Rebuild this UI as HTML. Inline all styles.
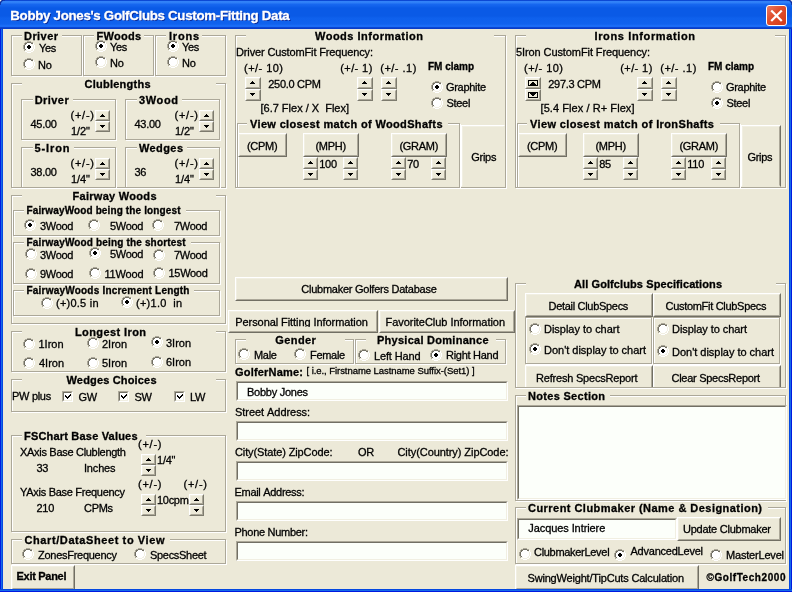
<!DOCTYPE html>
<html><head><meta charset="utf-8"><title>GolfClubs Custom-Fitting Data</title>
<style>
html,body{margin:0;padding:0;}
body{width:792px;height:592px;overflow:hidden;background:#ECE9D8;font-family:"Liberation Sans",sans-serif;position:relative;}
.t{position:absolute;white-space:nowrap;line-height:20px;height:20px;font-size:11px;color:#000;-webkit-text-stroke:0.3px currentColor;}
.r{position:absolute;}
#win{position:absolute;left:0;top:0;width:792px;height:592px;overflow:hidden;will-change:transform;}
</style></head>
<body><div id="win">
<div style="position:absolute;left:0px;top:0px;width:792px;height:29px;background:linear-gradient(180deg,#0c48d4 0px,#0c48d4 1px,#3282f8 1.5px,#2e7ef6 3px,#1868f0 4px,#1262ec 6px,#0a5ae6 8px,#0a5ae6 16px,#0e60ec 18px,#1062ee 24px,#1a6cf6 25.5px,#1a6cf6 26.5px,#0a46d4 27.5px,#0838c0 29px);"></div>
<div style="position:absolute;left:0px;top:29px;width:3px;height:563px;background:linear-gradient(90deg,#001ae0 0,#001ae0 1px,#156ae8 1px,#156ae8 2px,#0448e0 2px,#0448e0 3px);"></div>
<div style="position:absolute;left:789px;top:29px;width:3px;height:563px;background:linear-gradient(270deg,#001ae0 0,#001ae0 1px,#156ae8 1px,#156ae8 2px,#0448e0 2px,#0448e0 3px);"></div>
<div style="position:absolute;left:0px;top:589px;width:792px;height:3px;background:linear-gradient(0deg,#001ae0 0,#001ae0 1px,#156ae8 1px,#156ae8 2px,#0448e0 2px,#0448e0 3px);"></div>
<svg class="r" style="left:0;top:0" width="8" height="8" viewBox="0 0 8 8"><path d="M0 0h5C2 0 0 2 0 5z" fill="#fdfcf4"/><path d="M0 5C0 2 2 0 5 0" fill="none" stroke="#0a2a9c" stroke-width="1.2"/></svg>
<svg class="r" style="left:784px;top:0" width="8" height="8" viewBox="0 0 8 8"><path d="M8 0h-5C6 0 8 2 8 5z" fill="#fdfcf4"/><path d="M8 5C8 2 6 0 3 0" fill="none" stroke="#0a2a9c" stroke-width="1.2"/></svg>
<span class="t" style="left:10.3px;top:5.99px;font-size:13.3px;font-weight:bold;letter-spacing:-0.300px;color:#fff;text-shadow:1px 1px 0 #0a2a9a;">Bobby&nbsp;Jones&#x27;s&nbsp;GolfClubs&nbsp;Custom-Fitting&nbsp;Data</span>
<div style="position:absolute;left:766px;top:5px;width:21px;height:21px;box-sizing:border-box;border:1px solid #fff;border-radius:3px;background:linear-gradient(135deg,#ea7a62 0%,#e0502f 40%,#d43a18 100%);"></div>
<svg class="r" style="left:766px;top:5px" width="21" height="21" viewBox="0 0 21 21"><path d="M6 6.2L15 15.2M15 6.2L6 15.2" stroke="#fff" stroke-width="2.2" stroke-linecap="square"/></svg>
<div style="position:absolute;left:11px;top:35px;width:71px;height:41px;box-sizing:border-box;border:1px solid #ACA899;"></div>
<div style="position:absolute;left:12px;top:36px;width:71px;height:41px;box-sizing:border-box;border:1px solid #FFFFFF;"></div>
<div style="position:absolute;left:81px;top:35px;width:1px;height:41px;background:#ACA899;"></div>
<div style="position:absolute;left:11px;top:75px;width:71px;height:1px;background:#ACA899;"></div>
<div style="position:absolute;left:22px;top:34px;width:40px;height:4px;background:#ECE9D8;"></div>
<span class="t" style="left:24px;top:26.19px;font-size:11px;font-weight:bold;letter-spacing:0.441px;">Driver</span>
<svg class="r" style="left:23px;top:41px" width="12" height="12" viewBox="0 0 12 12" shape-rendering="crispEdges"><path d="M2 2h8v8h-8z M4 1h4v10h-4z M1 4h10v4h-10z" fill="#fff"/><path d="M4 0h4v1h-4z M2 1h2v1h-2z M8 1h2v1h-2z M1 2h1v2h-1z M0 4h1v4h-1z M1 8h1v2h-1z" fill="#ACA899"/><path d="M4 1h4v1h-4z M2 2h2v1h-2z M8 2h2v1h-2z M2 3h1v1h-1z M1 4h1v4h-1z M2 8h1v1h-1z" fill="#716F64"/><path d="M10 2h1v2h-1z M11 4h1v4h-1z M10 8h1v2h-1z M8 10h2v1h-2z M4 11h4v1h-4z M2 10h2v1h-2z" fill="#FFFFFF"/><path d="M9 3h1v1h-1z M10 4h1v4h-1z M9 8h1v1h-1z M8 9h2v1h-2z M4 10h4v1h-4z M2 9h2v1h-2z" fill="#F1EFE2"/><rect x="4" y="5" width="4" height="2" fill="#000"/><rect x="5" y="4" width="2" height="4" fill="#000"/></svg>
<span class="t" style="left:39px;top:38.19px;font-size:11px;letter-spacing:-0.300px;">Yes</span>
<svg class="r" style="left:23px;top:58px" width="12" height="12" viewBox="0 0 12 12" shape-rendering="crispEdges"><path d="M2 2h8v8h-8z M4 1h4v10h-4z M1 4h10v4h-10z" fill="#fff"/><path d="M4 0h4v1h-4z M2 1h2v1h-2z M8 1h2v1h-2z M1 2h1v2h-1z M0 4h1v4h-1z M1 8h1v2h-1z" fill="#ACA899"/><path d="M4 1h4v1h-4z M2 2h2v1h-2z M8 2h2v1h-2z M2 3h1v1h-1z M1 4h1v4h-1z M2 8h1v1h-1z" fill="#716F64"/><path d="M10 2h1v2h-1z M11 4h1v4h-1z M10 8h1v2h-1z M8 10h2v1h-2z M4 11h4v1h-4z M2 10h2v1h-2z" fill="#FFFFFF"/><path d="M9 3h1v1h-1z M10 4h1v4h-1z M9 8h1v1h-1z M8 9h2v1h-2z M4 10h4v1h-4z M2 9h2v1h-2z" fill="#F1EFE2"/></svg>
<span class="t" style="left:38px;top:55.19px;font-size:11px;letter-spacing:-0.300px;">No</span>
<div style="position:absolute;left:83px;top:35px;width:71px;height:41px;box-sizing:border-box;border:1px solid #ACA899;"></div>
<div style="position:absolute;left:84px;top:36px;width:71px;height:41px;box-sizing:border-box;border:1px solid #FFFFFF;"></div>
<div style="position:absolute;left:153px;top:35px;width:1px;height:41px;background:#ACA899;"></div>
<div style="position:absolute;left:83px;top:75px;width:71px;height:1px;background:#ACA899;"></div>
<div style="position:absolute;left:94px;top:34px;width:50px;height:4px;background:#ECE9D8;"></div>
<span class="t" style="left:96.5px;top:26.19px;font-size:11px;font-weight:bold;letter-spacing:0.265px;">FWoods</span>
<svg class="r" style="left:95px;top:40px" width="12" height="12" viewBox="0 0 12 12" shape-rendering="crispEdges"><path d="M2 2h8v8h-8z M4 1h4v10h-4z M1 4h10v4h-10z" fill="#fff"/><path d="M4 0h4v1h-4z M2 1h2v1h-2z M8 1h2v1h-2z M1 2h1v2h-1z M0 4h1v4h-1z M1 8h1v2h-1z" fill="#ACA899"/><path d="M4 1h4v1h-4z M2 2h2v1h-2z M8 2h2v1h-2z M2 3h1v1h-1z M1 4h1v4h-1z M2 8h1v1h-1z" fill="#716F64"/><path d="M10 2h1v2h-1z M11 4h1v4h-1z M10 8h1v2h-1z M8 10h2v1h-2z M4 11h4v1h-4z M2 10h2v1h-2z" fill="#FFFFFF"/><path d="M9 3h1v1h-1z M10 4h1v4h-1z M9 8h1v1h-1z M8 9h2v1h-2z M4 10h4v1h-4z M2 9h2v1h-2z" fill="#F1EFE2"/><rect x="4" y="5" width="4" height="2" fill="#000"/><rect x="5" y="4" width="2" height="4" fill="#000"/></svg>
<span class="t" style="left:110px;top:37.19px;font-size:11px;letter-spacing:-0.300px;">Yes</span>
<svg class="r" style="left:95px;top:56px" width="12" height="12" viewBox="0 0 12 12" shape-rendering="crispEdges"><path d="M2 2h8v8h-8z M4 1h4v10h-4z M1 4h10v4h-10z" fill="#fff"/><path d="M4 0h4v1h-4z M2 1h2v1h-2z M8 1h2v1h-2z M1 2h1v2h-1z M0 4h1v4h-1z M1 8h1v2h-1z" fill="#ACA899"/><path d="M4 1h4v1h-4z M2 2h2v1h-2z M8 2h2v1h-2z M2 3h1v1h-1z M1 4h1v4h-1z M2 8h1v1h-1z" fill="#716F64"/><path d="M10 2h1v2h-1z M11 4h1v4h-1z M10 8h1v2h-1z M8 10h2v1h-2z M4 11h4v1h-4z M2 10h2v1h-2z" fill="#FFFFFF"/><path d="M9 3h1v1h-1z M10 4h1v4h-1z M9 8h1v1h-1z M8 9h2v1h-2z M4 10h4v1h-4z M2 9h2v1h-2z" fill="#F1EFE2"/></svg>
<span class="t" style="left:110px;top:53.19px;font-size:11px;letter-spacing:-0.300px;">No</span>
<div style="position:absolute;left:155px;top:35px;width:71px;height:41px;box-sizing:border-box;border:1px solid #ACA899;"></div>
<div style="position:absolute;left:156px;top:36px;width:71px;height:41px;box-sizing:border-box;border:1px solid #FFFFFF;"></div>
<div style="position:absolute;left:225px;top:35px;width:1px;height:41px;background:#ACA899;"></div>
<div style="position:absolute;left:155px;top:75px;width:71px;height:1px;background:#ACA899;"></div>
<div style="position:absolute;left:166px;top:34px;width:36px;height:4px;background:#ECE9D8;"></div>
<span class="t" style="left:169px;top:26.19px;font-size:11px;font-weight:bold;letter-spacing:0.777px;">Irons</span>
<svg class="r" style="left:167px;top:40px" width="12" height="12" viewBox="0 0 12 12" shape-rendering="crispEdges"><path d="M2 2h8v8h-8z M4 1h4v10h-4z M1 4h10v4h-10z" fill="#fff"/><path d="M4 0h4v1h-4z M2 1h2v1h-2z M8 1h2v1h-2z M1 2h1v2h-1z M0 4h1v4h-1z M1 8h1v2h-1z" fill="#ACA899"/><path d="M4 1h4v1h-4z M2 2h2v1h-2z M8 2h2v1h-2z M2 3h1v1h-1z M1 4h1v4h-1z M2 8h1v1h-1z" fill="#716F64"/><path d="M10 2h1v2h-1z M11 4h1v4h-1z M10 8h1v2h-1z M8 10h2v1h-2z M4 11h4v1h-4z M2 10h2v1h-2z" fill="#FFFFFF"/><path d="M9 3h1v1h-1z M10 4h1v4h-1z M9 8h1v1h-1z M8 9h2v1h-2z M4 10h4v1h-4z M2 9h2v1h-2z" fill="#F1EFE2"/><rect x="4" y="5" width="4" height="2" fill="#000"/><rect x="5" y="4" width="2" height="4" fill="#000"/></svg>
<span class="t" style="left:182px;top:37.19px;font-size:11px;letter-spacing:-0.300px;">Yes</span>
<svg class="r" style="left:167px;top:56px" width="12" height="12" viewBox="0 0 12 12" shape-rendering="crispEdges"><path d="M2 2h8v8h-8z M4 1h4v10h-4z M1 4h10v4h-10z" fill="#fff"/><path d="M4 0h4v1h-4z M2 1h2v1h-2z M8 1h2v1h-2z M1 2h1v2h-1z M0 4h1v4h-1z M1 8h1v2h-1z" fill="#ACA899"/><path d="M4 1h4v1h-4z M2 2h2v1h-2z M8 2h2v1h-2z M2 3h1v1h-1z M1 4h1v4h-1z M2 8h1v1h-1z" fill="#716F64"/><path d="M10 2h1v2h-1z M11 4h1v4h-1z M10 8h1v2h-1z M8 10h2v1h-2z M4 11h4v1h-4z M2 10h2v1h-2z" fill="#FFFFFF"/><path d="M9 3h1v1h-1z M10 4h1v4h-1z M9 8h1v1h-1z M8 9h2v1h-2z M4 10h4v1h-4z M2 9h2v1h-2z" fill="#F1EFE2"/></svg>
<span class="t" style="left:182px;top:53.19px;font-size:11px;letter-spacing:-0.300px;">No</span>
<div style="position:absolute;left:11px;top:83px;width:215px;height:105px;box-sizing:border-box;border:1px solid #ACA899;"></div>
<div style="position:absolute;left:12px;top:84px;width:215px;height:105px;box-sizing:border-box;border:1px solid #FFFFFF;"></div>
<div style="position:absolute;left:225px;top:83px;width:1px;height:105px;background:#ACA899;"></div>
<div style="position:absolute;left:11px;top:187px;width:215px;height:1px;background:#ACA899;"></div>
<div style="position:absolute;left:22px;top:82px;width:194px;height:4px;background:#ECE9D8;"></div>
<span class="t" style="left:84.5px;top:74.19px;font-size:11px;font-weight:bold;letter-spacing:0.245px;">Clublengths</span>
<div style="position:absolute;left:21px;top:99px;width:95px;height:41px;box-sizing:border-box;border:1px solid #ACA899;"></div>
<div style="position:absolute;left:22px;top:100px;width:95px;height:41px;box-sizing:border-box;border:1px solid #FFFFFF;"></div>
<div style="position:absolute;left:115px;top:99px;width:1px;height:41px;background:#ACA899;"></div>
<div style="position:absolute;left:21px;top:139px;width:95px;height:1px;background:#ACA899;"></div>
<div style="position:absolute;left:32.7px;top:98px;width:40px;height:4px;background:#ECE9D8;"></div>
<span class="t" style="left:34.7px;top:90.19px;font-size:11px;font-weight:bold;letter-spacing:0.441px;">Driver</span>
<span class="t" style="left:30.5px;top:114.19px;font-size:11px;letter-spacing:-0.300px;">45.00</span>
<span class="t" style="left:70.5px;top:105.19px;font-size:11px;letter-spacing:0.757px;">(+/-)</span>
<span class="t" style="left:71px;top:121.19px;font-size:11px;letter-spacing:-0.065px;">1/2&quot;</span>
<div style="position:absolute;left:95px;top:110px;width:15px;height:11px;box-sizing:border-box;background:#ECE9D8;border:1px solid;border-color:#FFFFFF #7d7b6e #7d7b6e #FFFFFF;"></div>
<div style="position:absolute;left:96px;top:111px;width:13px;height:9px;box-sizing:border-box;border:1px solid;border-color:#F1EFE2 #ACA899 #ACA899 #F1EFE2;"></div>
<div style="position:absolute;left:102px;top:114px;width:1px;height:1px;background:#000;"></div>
<div style="position:absolute;left:101px;top:115px;width:3px;height:1px;background:#000;"></div>
<div style="position:absolute;left:100px;top:116px;width:5px;height:1px;background:#000;"></div>
<div style="position:absolute;left:95px;top:121px;width:15px;height:11px;box-sizing:border-box;background:#ECE9D8;border:1px solid;border-color:#FFFFFF #7d7b6e #7d7b6e #FFFFFF;"></div>
<div style="position:absolute;left:96px;top:122px;width:13px;height:9px;box-sizing:border-box;border:1px solid;border-color:#F1EFE2 #ACA899 #ACA899 #F1EFE2;"></div>
<div style="position:absolute;left:100px;top:125px;width:5px;height:1px;background:#000;"></div>
<div style="position:absolute;left:101px;top:126px;width:3px;height:1px;background:#000;"></div>
<div style="position:absolute;left:102px;top:127px;width:1px;height:1px;background:#000;"></div>
<div style="position:absolute;left:125px;top:99px;width:95px;height:41px;box-sizing:border-box;border:1px solid #ACA899;"></div>
<div style="position:absolute;left:126px;top:100px;width:95px;height:41px;box-sizing:border-box;border:1px solid #FFFFFF;"></div>
<div style="position:absolute;left:219px;top:99px;width:1px;height:41px;background:#ACA899;"></div>
<div style="position:absolute;left:125px;top:139px;width:95px;height:1px;background:#ACA899;"></div>
<div style="position:absolute;left:137px;top:98px;width:45px;height:4px;background:#ECE9D8;"></div>
<span class="t" style="left:139px;top:90.19px;font-size:11px;font-weight:bold;letter-spacing:0.636px;">3Wood</span>
<span class="t" style="left:134.5px;top:114.19px;font-size:11px;letter-spacing:-0.300px;">43.00</span>
<span class="t" style="left:174.5px;top:105.19px;font-size:11px;letter-spacing:0.757px;">(+/-)</span>
<span class="t" style="left:175px;top:121.19px;font-size:11px;letter-spacing:-0.065px;">1/2&quot;</span>
<div style="position:absolute;left:199px;top:110px;width:15px;height:11px;box-sizing:border-box;background:#ECE9D8;border:1px solid;border-color:#FFFFFF #7d7b6e #7d7b6e #FFFFFF;"></div>
<div style="position:absolute;left:200px;top:111px;width:13px;height:9px;box-sizing:border-box;border:1px solid;border-color:#F1EFE2 #ACA899 #ACA899 #F1EFE2;"></div>
<div style="position:absolute;left:206px;top:114px;width:1px;height:1px;background:#000;"></div>
<div style="position:absolute;left:205px;top:115px;width:3px;height:1px;background:#000;"></div>
<div style="position:absolute;left:204px;top:116px;width:5px;height:1px;background:#000;"></div>
<div style="position:absolute;left:199px;top:121px;width:15px;height:11px;box-sizing:border-box;background:#ECE9D8;border:1px solid;border-color:#FFFFFF #7d7b6e #7d7b6e #FFFFFF;"></div>
<div style="position:absolute;left:200px;top:122px;width:13px;height:9px;box-sizing:border-box;border:1px solid;border-color:#F1EFE2 #ACA899 #ACA899 #F1EFE2;"></div>
<div style="position:absolute;left:204px;top:125px;width:5px;height:1px;background:#000;"></div>
<div style="position:absolute;left:205px;top:126px;width:3px;height:1px;background:#000;"></div>
<div style="position:absolute;left:206px;top:127px;width:1px;height:1px;background:#000;"></div>
<div style="position:absolute;left:21px;top:147px;width:95px;height:41px;box-sizing:border-box;border:1px solid #ACA899;"></div>
<div style="position:absolute;left:22px;top:148px;width:95px;height:41px;box-sizing:border-box;border:1px solid #FFFFFF;"></div>
<div style="position:absolute;left:115px;top:147px;width:1px;height:41px;background:#ACA899;"></div>
<div style="position:absolute;left:21px;top:187px;width:95px;height:1px;background:#ACA899;"></div>
<div style="position:absolute;left:32.5px;top:146px;width:41px;height:4px;background:#ECE9D8;"></div>
<span class="t" style="left:34.5px;top:138.19px;font-size:11px;font-weight:bold;letter-spacing:0.889px;">5-Iron</span>
<span class="t" style="left:30.5px;top:162.19px;font-size:11px;letter-spacing:-0.300px;">38.00</span>
<span class="t" style="left:70.5px;top:153.19px;font-size:11px;letter-spacing:0.757px;">(+/-)</span>
<span class="t" style="left:71px;top:169.19px;font-size:11px;letter-spacing:-0.065px;">1/4&quot;</span>
<div style="position:absolute;left:95px;top:158px;width:15px;height:11px;box-sizing:border-box;background:#ECE9D8;border:1px solid;border-color:#FFFFFF #7d7b6e #7d7b6e #FFFFFF;"></div>
<div style="position:absolute;left:96px;top:159px;width:13px;height:9px;box-sizing:border-box;border:1px solid;border-color:#F1EFE2 #ACA899 #ACA899 #F1EFE2;"></div>
<div style="position:absolute;left:102px;top:162px;width:1px;height:1px;background:#000;"></div>
<div style="position:absolute;left:101px;top:163px;width:3px;height:1px;background:#000;"></div>
<div style="position:absolute;left:100px;top:164px;width:5px;height:1px;background:#000;"></div>
<div style="position:absolute;left:95px;top:169px;width:15px;height:11px;box-sizing:border-box;background:#ECE9D8;border:1px solid;border-color:#FFFFFF #7d7b6e #7d7b6e #FFFFFF;"></div>
<div style="position:absolute;left:96px;top:170px;width:13px;height:9px;box-sizing:border-box;border:1px solid;border-color:#F1EFE2 #ACA899 #ACA899 #F1EFE2;"></div>
<div style="position:absolute;left:100px;top:173px;width:5px;height:1px;background:#000;"></div>
<div style="position:absolute;left:101px;top:174px;width:3px;height:1px;background:#000;"></div>
<div style="position:absolute;left:102px;top:175px;width:1px;height:1px;background:#000;"></div>
<div style="position:absolute;left:125px;top:147px;width:95px;height:41px;box-sizing:border-box;border:1px solid #ACA899;"></div>
<div style="position:absolute;left:126px;top:148px;width:95px;height:41px;box-sizing:border-box;border:1px solid #FFFFFF;"></div>
<div style="position:absolute;left:219px;top:147px;width:1px;height:41px;background:#ACA899;"></div>
<div style="position:absolute;left:125px;top:187px;width:95px;height:1px;background:#ACA899;"></div>
<div style="position:absolute;left:137px;top:146px;width:50px;height:4px;background:#ECE9D8;"></div>
<span class="t" style="left:139px;top:138.19px;font-size:11px;font-weight:bold;letter-spacing:0.405px;">Wedges</span>
<span class="t" style="left:134.5px;top:162.19px;font-size:11px;letter-spacing:-0.300px;">36</span>
<span class="t" style="left:174.5px;top:153.19px;font-size:11px;letter-spacing:0.757px;">(+/-)</span>
<span class="t" style="left:175px;top:169.19px;font-size:11px;letter-spacing:-0.065px;">1/4&quot;</span>
<div style="position:absolute;left:199px;top:158px;width:15px;height:11px;box-sizing:border-box;background:#ECE9D8;border:1px solid;border-color:#FFFFFF #7d7b6e #7d7b6e #FFFFFF;"></div>
<div style="position:absolute;left:200px;top:159px;width:13px;height:9px;box-sizing:border-box;border:1px solid;border-color:#F1EFE2 #ACA899 #ACA899 #F1EFE2;"></div>
<div style="position:absolute;left:206px;top:162px;width:1px;height:1px;background:#000;"></div>
<div style="position:absolute;left:205px;top:163px;width:3px;height:1px;background:#000;"></div>
<div style="position:absolute;left:204px;top:164px;width:5px;height:1px;background:#000;"></div>
<div style="position:absolute;left:199px;top:169px;width:15px;height:11px;box-sizing:border-box;background:#ECE9D8;border:1px solid;border-color:#FFFFFF #7d7b6e #7d7b6e #FFFFFF;"></div>
<div style="position:absolute;left:200px;top:170px;width:13px;height:9px;box-sizing:border-box;border:1px solid;border-color:#F1EFE2 #ACA899 #ACA899 #F1EFE2;"></div>
<div style="position:absolute;left:204px;top:173px;width:5px;height:1px;background:#000;"></div>
<div style="position:absolute;left:205px;top:174px;width:3px;height:1px;background:#000;"></div>
<div style="position:absolute;left:206px;top:175px;width:1px;height:1px;background:#000;"></div>
<div style="position:absolute;left:11px;top:195px;width:215px;height:129px;box-sizing:border-box;border:1px solid #ACA899;"></div>
<div style="position:absolute;left:12px;top:196px;width:215px;height:129px;box-sizing:border-box;border:1px solid #FFFFFF;"></div>
<div style="position:absolute;left:225px;top:195px;width:1px;height:129px;background:#ACA899;"></div>
<div style="position:absolute;left:11px;top:323px;width:215px;height:1px;background:#ACA899;"></div>
<div style="position:absolute;left:22px;top:194px;width:194px;height:4px;background:#ECE9D8;"></div>
<span class="t" style="left:72.5px;top:186.19px;font-size:11px;font-weight:bold;letter-spacing:0.293px;">Fairway&nbsp;Woods</span>
<div style="position:absolute;left:13px;top:210px;width:207px;height:26px;box-sizing:border-box;border:1px solid #ACA899;"></div>
<div style="position:absolute;left:14px;top:211px;width:207px;height:26px;box-sizing:border-box;border:1px solid #FFFFFF;"></div>
<div style="position:absolute;left:219px;top:210px;width:1px;height:26px;background:#ACA899;"></div>
<div style="position:absolute;left:13px;top:235px;width:207px;height:1px;background:#ACA899;"></div>
<div style="position:absolute;left:24px;top:209px;width:162px;height:4px;background:#ECE9D8;"></div>
<span class="t" style="left:26.5px;top:200.53px;font-size:10px;font-weight:bold;letter-spacing:0.128px;">FairwayWood&nbsp;being&nbsp;the&nbsp;longest</span>
<svg class="r" style="left:24px;top:219px" width="12" height="12" viewBox="0 0 12 12" shape-rendering="crispEdges"><path d="M2 2h8v8h-8z M4 1h4v10h-4z M1 4h10v4h-10z" fill="#fff"/><path d="M4 0h4v1h-4z M2 1h2v1h-2z M8 1h2v1h-2z M1 2h1v2h-1z M0 4h1v4h-1z M1 8h1v2h-1z" fill="#ACA899"/><path d="M4 1h4v1h-4z M2 2h2v1h-2z M8 2h2v1h-2z M2 3h1v1h-1z M1 4h1v4h-1z M2 8h1v1h-1z" fill="#716F64"/><path d="M10 2h1v2h-1z M11 4h1v4h-1z M10 8h1v2h-1z M8 10h2v1h-2z M4 11h4v1h-4z M2 10h2v1h-2z" fill="#FFFFFF"/><path d="M9 3h1v1h-1z M10 4h1v4h-1z M9 8h1v1h-1z M8 9h2v1h-2z M4 10h4v1h-4z M2 9h2v1h-2z" fill="#F1EFE2"/><rect x="4" y="5" width="4" height="2" fill="#000"/><rect x="5" y="4" width="2" height="4" fill="#000"/></svg>
<span class="t" style="left:40px;top:216.19px;font-size:11px;letter-spacing:-0.300px;">3Wood</span>
<svg class="r" style="left:88px;top:219px" width="12" height="12" viewBox="0 0 12 12" shape-rendering="crispEdges"><path d="M2 2h8v8h-8z M4 1h4v10h-4z M1 4h10v4h-10z" fill="#fff"/><path d="M4 0h4v1h-4z M2 1h2v1h-2z M8 1h2v1h-2z M1 2h1v2h-1z M0 4h1v4h-1z M1 8h1v2h-1z" fill="#ACA899"/><path d="M4 1h4v1h-4z M2 2h2v1h-2z M8 2h2v1h-2z M2 3h1v1h-1z M1 4h1v4h-1z M2 8h1v1h-1z" fill="#716F64"/><path d="M10 2h1v2h-1z M11 4h1v4h-1z M10 8h1v2h-1z M8 10h2v1h-2z M4 11h4v1h-4z M2 10h2v1h-2z" fill="#FFFFFF"/><path d="M9 3h1v1h-1z M10 4h1v4h-1z M9 8h1v1h-1z M8 9h2v1h-2z M4 10h4v1h-4z M2 9h2v1h-2z" fill="#F1EFE2"/></svg>
<span class="t" style="left:110px;top:216.19px;font-size:11px;letter-spacing:-0.300px;">5Wood</span>
<svg class="r" style="left:152px;top:219px" width="12" height="12" viewBox="0 0 12 12" shape-rendering="crispEdges"><path d="M2 2h8v8h-8z M4 1h4v10h-4z M1 4h10v4h-10z" fill="#fff"/><path d="M4 0h4v1h-4z M2 1h2v1h-2z M8 1h2v1h-2z M1 2h1v2h-1z M0 4h1v4h-1z M1 8h1v2h-1z" fill="#ACA899"/><path d="M4 1h4v1h-4z M2 2h2v1h-2z M8 2h2v1h-2z M2 3h1v1h-1z M1 4h1v4h-1z M2 8h1v1h-1z" fill="#716F64"/><path d="M10 2h1v2h-1z M11 4h1v4h-1z M10 8h1v2h-1z M8 10h2v1h-2z M4 11h4v1h-4z M2 10h2v1h-2z" fill="#FFFFFF"/><path d="M9 3h1v1h-1z M10 4h1v4h-1z M9 8h1v1h-1z M8 9h2v1h-2z M4 10h4v1h-4z M2 9h2v1h-2z" fill="#F1EFE2"/></svg>
<span class="t" style="left:174px;top:216.19px;font-size:11px;letter-spacing:-0.300px;">7Wood</span>
<div style="position:absolute;left:13px;top:242px;width:207px;height:42px;box-sizing:border-box;border:1px solid #ACA899;"></div>
<div style="position:absolute;left:14px;top:243px;width:207px;height:42px;box-sizing:border-box;border:1px solid #FFFFFF;"></div>
<div style="position:absolute;left:219px;top:242px;width:1px;height:42px;background:#ACA899;"></div>
<div style="position:absolute;left:13px;top:283px;width:207px;height:1px;background:#ACA899;"></div>
<div style="position:absolute;left:24px;top:241px;width:167px;height:4px;background:#ECE9D8;"></div>
<span class="t" style="left:26.5px;top:232.53px;font-size:10px;font-weight:bold;letter-spacing:0.162px;">FairwayWood&nbsp;being&nbsp;the&nbsp;shortest</span>
<svg class="r" style="left:25px;top:248px" width="12" height="12" viewBox="0 0 12 12" shape-rendering="crispEdges"><path d="M2 2h8v8h-8z M4 1h4v10h-4z M1 4h10v4h-10z" fill="#fff"/><path d="M4 0h4v1h-4z M2 1h2v1h-2z M8 1h2v1h-2z M1 2h1v2h-1z M0 4h1v4h-1z M1 8h1v2h-1z" fill="#ACA899"/><path d="M4 1h4v1h-4z M2 2h2v1h-2z M8 2h2v1h-2z M2 3h1v1h-1z M1 4h1v4h-1z M2 8h1v1h-1z" fill="#716F64"/><path d="M10 2h1v2h-1z M11 4h1v4h-1z M10 8h1v2h-1z M8 10h2v1h-2z M4 11h4v1h-4z M2 10h2v1h-2z" fill="#FFFFFF"/><path d="M9 3h1v1h-1z M10 4h1v4h-1z M9 8h1v1h-1z M8 9h2v1h-2z M4 10h4v1h-4z M2 9h2v1h-2z" fill="#F1EFE2"/></svg>
<span class="t" style="left:40px;top:245.19px;font-size:11px;letter-spacing:-0.300px;">3Wood</span>
<svg class="r" style="left:89px;top:247px" width="12" height="12" viewBox="0 0 12 12" shape-rendering="crispEdges"><path d="M2 2h8v8h-8z M4 1h4v10h-4z M1 4h10v4h-10z" fill="#fff"/><path d="M4 0h4v1h-4z M2 1h2v1h-2z M8 1h2v1h-2z M1 2h1v2h-1z M0 4h1v4h-1z M1 8h1v2h-1z" fill="#ACA899"/><path d="M4 1h4v1h-4z M2 2h2v1h-2z M8 2h2v1h-2z M2 3h1v1h-1z M1 4h1v4h-1z M2 8h1v1h-1z" fill="#716F64"/><path d="M10 2h1v2h-1z M11 4h1v4h-1z M10 8h1v2h-1z M8 10h2v1h-2z M4 11h4v1h-4z M2 10h2v1h-2z" fill="#FFFFFF"/><path d="M9 3h1v1h-1z M10 4h1v4h-1z M9 8h1v1h-1z M8 9h2v1h-2z M4 10h4v1h-4z M2 9h2v1h-2z" fill="#F1EFE2"/><rect x="4" y="5" width="4" height="2" fill="#000"/><rect x="5" y="4" width="2" height="4" fill="#000"/></svg>
<span class="t" style="left:110px;top:244.19px;font-size:11px;letter-spacing:-0.300px;">5Wood</span>
<svg class="r" style="left:153px;top:249px" width="12" height="12" viewBox="0 0 12 12" shape-rendering="crispEdges"><path d="M2 2h8v8h-8z M4 1h4v10h-4z M1 4h10v4h-10z" fill="#fff"/><path d="M4 0h4v1h-4z M2 1h2v1h-2z M8 1h2v1h-2z M1 2h1v2h-1z M0 4h1v4h-1z M1 8h1v2h-1z" fill="#ACA899"/><path d="M4 1h4v1h-4z M2 2h2v1h-2z M8 2h2v1h-2z M2 3h1v1h-1z M1 4h1v4h-1z M2 8h1v1h-1z" fill="#716F64"/><path d="M10 2h1v2h-1z M11 4h1v4h-1z M10 8h1v2h-1z M8 10h2v1h-2z M4 11h4v1h-4z M2 10h2v1h-2z" fill="#FFFFFF"/><path d="M9 3h1v1h-1z M10 4h1v4h-1z M9 8h1v1h-1z M8 9h2v1h-2z M4 10h4v1h-4z M2 9h2v1h-2z" fill="#F1EFE2"/></svg>
<span class="t" style="left:174px;top:245.19px;font-size:11px;letter-spacing:-0.300px;">7Wood</span>
<svg class="r" style="left:25px;top:268px" width="12" height="12" viewBox="0 0 12 12" shape-rendering="crispEdges"><path d="M2 2h8v8h-8z M4 1h4v10h-4z M1 4h10v4h-10z" fill="#fff"/><path d="M4 0h4v1h-4z M2 1h2v1h-2z M8 1h2v1h-2z M1 2h1v2h-1z M0 4h1v4h-1z M1 8h1v2h-1z" fill="#ACA899"/><path d="M4 1h4v1h-4z M2 2h2v1h-2z M8 2h2v1h-2z M2 3h1v1h-1z M1 4h1v4h-1z M2 8h1v1h-1z" fill="#716F64"/><path d="M10 2h1v2h-1z M11 4h1v4h-1z M10 8h1v2h-1z M8 10h2v1h-2z M4 11h4v1h-4z M2 10h2v1h-2z" fill="#FFFFFF"/><path d="M9 3h1v1h-1z M10 4h1v4h-1z M9 8h1v1h-1z M8 9h2v1h-2z M4 10h4v1h-4z M2 9h2v1h-2z" fill="#F1EFE2"/></svg>
<span class="t" style="left:40px;top:264.19px;font-size:11px;letter-spacing:-0.300px;">9Wood</span>
<svg class="r" style="left:89px;top:267px" width="12" height="12" viewBox="0 0 12 12" shape-rendering="crispEdges"><path d="M2 2h8v8h-8z M4 1h4v10h-4z M1 4h10v4h-10z" fill="#fff"/><path d="M4 0h4v1h-4z M2 1h2v1h-2z M8 1h2v1h-2z M1 2h1v2h-1z M0 4h1v4h-1z M1 8h1v2h-1z" fill="#ACA899"/><path d="M4 1h4v1h-4z M2 2h2v1h-2z M8 2h2v1h-2z M2 3h1v1h-1z M1 4h1v4h-1z M2 8h1v1h-1z" fill="#716F64"/><path d="M10 2h1v2h-1z M11 4h1v4h-1z M10 8h1v2h-1z M8 10h2v1h-2z M4 11h4v1h-4z M2 10h2v1h-2z" fill="#FFFFFF"/><path d="M9 3h1v1h-1z M10 4h1v4h-1z M9 8h1v1h-1z M8 9h2v1h-2z M4 10h4v1h-4z M2 9h2v1h-2z" fill="#F1EFE2"/></svg>
<span class="t" style="left:104.5px;top:264.19px;font-size:11px;letter-spacing:-0.191px;">11Wood</span>
<svg class="r" style="left:153px;top:267px" width="12" height="12" viewBox="0 0 12 12" shape-rendering="crispEdges"><path d="M2 2h8v8h-8z M4 1h4v10h-4z M1 4h10v4h-10z" fill="#fff"/><path d="M4 0h4v1h-4z M2 1h2v1h-2z M8 1h2v1h-2z M1 2h1v2h-1z M0 4h1v4h-1z M1 8h1v2h-1z" fill="#ACA899"/><path d="M4 1h4v1h-4z M2 2h2v1h-2z M8 2h2v1h-2z M2 3h1v1h-1z M1 4h1v4h-1z M2 8h1v1h-1z" fill="#716F64"/><path d="M10 2h1v2h-1z M11 4h1v4h-1z M10 8h1v2h-1z M8 10h2v1h-2z M4 11h4v1h-4z M2 10h2v1h-2z" fill="#FFFFFF"/><path d="M9 3h1v1h-1z M10 4h1v4h-1z M9 8h1v1h-1z M8 9h2v1h-2z M4 10h4v1h-4z M2 9h2v1h-2z" fill="#F1EFE2"/></svg>
<span class="t" style="left:168.5px;top:263.19px;font-size:11px;letter-spacing:-0.300px;">15Wood</span>
<div style="position:absolute;left:13px;top:290px;width:207px;height:26px;box-sizing:border-box;border:1px solid #ACA899;"></div>
<div style="position:absolute;left:14px;top:291px;width:207px;height:26px;box-sizing:border-box;border:1px solid #FFFFFF;"></div>
<div style="position:absolute;left:219px;top:290px;width:1px;height:26px;background:#ACA899;"></div>
<div style="position:absolute;left:13px;top:315px;width:207px;height:1px;background:#ACA899;"></div>
<div style="position:absolute;left:24px;top:289px;width:170px;height:4px;background:#ECE9D8;"></div>
<span class="t" style="left:26.5px;top:280.54px;font-size:10px;font-weight:bold;letter-spacing:0.211px;">FairwayWoods&nbsp;Increment&nbsp;Length</span>
<svg class="r" style="left:41px;top:297px" width="12" height="12" viewBox="0 0 12 12" shape-rendering="crispEdges"><path d="M2 2h8v8h-8z M4 1h4v10h-4z M1 4h10v4h-10z" fill="#fff"/><path d="M4 0h4v1h-4z M2 1h2v1h-2z M8 1h2v1h-2z M1 2h1v2h-1z M0 4h1v4h-1z M1 8h1v2h-1z" fill="#ACA899"/><path d="M4 1h4v1h-4z M2 2h2v1h-2z M8 2h2v1h-2z M2 3h1v1h-1z M1 4h1v4h-1z M2 8h1v1h-1z" fill="#716F64"/><path d="M10 2h1v2h-1z M11 4h1v4h-1z M10 8h1v2h-1z M8 10h2v1h-2z M4 11h4v1h-4z M2 10h2v1h-2z" fill="#FFFFFF"/><path d="M9 3h1v1h-1z M10 4h1v4h-1z M9 8h1v1h-1z M8 9h2v1h-2z M4 10h4v1h-4z M2 9h2v1h-2z" fill="#F1EFE2"/></svg>
<span class="t" style="left:56px;top:293.19px;font-size:11px;letter-spacing:0.230px;">(+)0.5&nbsp;in</span>
<svg class="r" style="left:121px;top:296px" width="12" height="12" viewBox="0 0 12 12" shape-rendering="crispEdges"><path d="M2 2h8v8h-8z M4 1h4v10h-4z M1 4h10v4h-10z" fill="#fff"/><path d="M4 0h4v1h-4z M2 1h2v1h-2z M8 1h2v1h-2z M1 2h1v2h-1z M0 4h1v4h-1z M1 8h1v2h-1z" fill="#ACA899"/><path d="M4 1h4v1h-4z M2 2h2v1h-2z M8 2h2v1h-2z M2 3h1v1h-1z M1 4h1v4h-1z M2 8h1v1h-1z" fill="#716F64"/><path d="M10 2h1v2h-1z M11 4h1v4h-1z M10 8h1v2h-1z M8 10h2v1h-2z M4 11h4v1h-4z M2 10h2v1h-2z" fill="#FFFFFF"/><path d="M9 3h1v1h-1z M10 4h1v4h-1z M9 8h1v1h-1z M8 9h2v1h-2z M4 10h4v1h-4z M2 9h2v1h-2z" fill="#F1EFE2"/><rect x="4" y="5" width="4" height="2" fill="#000"/><rect x="5" y="4" width="2" height="4" fill="#000"/></svg>
<span class="t" style="left:136px;top:293.19px;font-size:11px;letter-spacing:0.254px;">(+)1.0&nbsp;&nbsp;in</span>
<div style="position:absolute;left:11px;top:331px;width:215px;height:41px;box-sizing:border-box;border:1px solid #ACA899;"></div>
<div style="position:absolute;left:12px;top:332px;width:215px;height:41px;box-sizing:border-box;border:1px solid #FFFFFF;"></div>
<div style="position:absolute;left:225px;top:331px;width:1px;height:41px;background:#ACA899;"></div>
<div style="position:absolute;left:11px;top:371px;width:215px;height:1px;background:#ACA899;"></div>
<div style="position:absolute;left:22px;top:330px;width:194px;height:4px;background:#ECE9D8;"></div>
<span class="t" style="left:75px;top:322.19px;font-size:11px;font-weight:bold;letter-spacing:0.400px;">Longest&nbsp;Iron</span>
<svg class="r" style="left:23px;top:338px" width="12" height="12" viewBox="0 0 12 12" shape-rendering="crispEdges"><path d="M2 2h8v8h-8z M4 1h4v10h-4z M1 4h10v4h-10z" fill="#fff"/><path d="M4 0h4v1h-4z M2 1h2v1h-2z M8 1h2v1h-2z M1 2h1v2h-1z M0 4h1v4h-1z M1 8h1v2h-1z" fill="#ACA899"/><path d="M4 1h4v1h-4z M2 2h2v1h-2z M8 2h2v1h-2z M2 3h1v1h-1z M1 4h1v4h-1z M2 8h1v1h-1z" fill="#716F64"/><path d="M10 2h1v2h-1z M11 4h1v4h-1z M10 8h1v2h-1z M8 10h2v1h-2z M4 11h4v1h-4z M2 10h2v1h-2z" fill="#FFFFFF"/><path d="M9 3h1v1h-1z M10 4h1v4h-1z M9 8h1v1h-1z M8 9h2v1h-2z M4 10h4v1h-4z M2 9h2v1h-2z" fill="#F1EFE2"/></svg>
<span class="t" style="left:38.5px;top:334.19px;font-size:11px;letter-spacing:-0.018px;">1Iron</span>
<svg class="r" style="left:87px;top:337px" width="12" height="12" viewBox="0 0 12 12" shape-rendering="crispEdges"><path d="M2 2h8v8h-8z M4 1h4v10h-4z M1 4h10v4h-10z" fill="#fff"/><path d="M4 0h4v1h-4z M2 1h2v1h-2z M8 1h2v1h-2z M1 2h1v2h-1z M0 4h1v4h-1z M1 8h1v2h-1z" fill="#ACA899"/><path d="M4 1h4v1h-4z M2 2h2v1h-2z M8 2h2v1h-2z M2 3h1v1h-1z M1 4h1v4h-1z M2 8h1v1h-1z" fill="#716F64"/><path d="M10 2h1v2h-1z M11 4h1v4h-1z M10 8h1v2h-1z M8 10h2v1h-2z M4 11h4v1h-4z M2 10h2v1h-2z" fill="#FFFFFF"/><path d="M9 3h1v1h-1z M10 4h1v4h-1z M9 8h1v1h-1z M8 9h2v1h-2z M4 10h4v1h-4z M2 9h2v1h-2z" fill="#F1EFE2"/></svg>
<span class="t" style="left:102px;top:334.19px;font-size:11px;letter-spacing:-0.018px;">2Iron</span>
<svg class="r" style="left:151px;top:336px" width="12" height="12" viewBox="0 0 12 12" shape-rendering="crispEdges"><path d="M2 2h8v8h-8z M4 1h4v10h-4z M1 4h10v4h-10z" fill="#fff"/><path d="M4 0h4v1h-4z M2 1h2v1h-2z M8 1h2v1h-2z M1 2h1v2h-1z M0 4h1v4h-1z M1 8h1v2h-1z" fill="#ACA899"/><path d="M4 1h4v1h-4z M2 2h2v1h-2z M8 2h2v1h-2z M2 3h1v1h-1z M1 4h1v4h-1z M2 8h1v1h-1z" fill="#716F64"/><path d="M10 2h1v2h-1z M11 4h1v4h-1z M10 8h1v2h-1z M8 10h2v1h-2z M4 11h4v1h-4z M2 10h2v1h-2z" fill="#FFFFFF"/><path d="M9 3h1v1h-1z M10 4h1v4h-1z M9 8h1v1h-1z M8 9h2v1h-2z M4 10h4v1h-4z M2 9h2v1h-2z" fill="#F1EFE2"/><rect x="4" y="5" width="4" height="2" fill="#000"/><rect x="5" y="4" width="2" height="4" fill="#000"/></svg>
<span class="t" style="left:166px;top:333.19px;font-size:11px;letter-spacing:-0.018px;">3Iron</span>
<svg class="r" style="left:23px;top:357px" width="12" height="12" viewBox="0 0 12 12" shape-rendering="crispEdges"><path d="M2 2h8v8h-8z M4 1h4v10h-4z M1 4h10v4h-10z" fill="#fff"/><path d="M4 0h4v1h-4z M2 1h2v1h-2z M8 1h2v1h-2z M1 2h1v2h-1z M0 4h1v4h-1z M1 8h1v2h-1z" fill="#ACA899"/><path d="M4 1h4v1h-4z M2 2h2v1h-2z M8 2h2v1h-2z M2 3h1v1h-1z M1 4h1v4h-1z M2 8h1v1h-1z" fill="#716F64"/><path d="M10 2h1v2h-1z M11 4h1v4h-1z M10 8h1v2h-1z M8 10h2v1h-2z M4 11h4v1h-4z M2 10h2v1h-2z" fill="#FFFFFF"/><path d="M9 3h1v1h-1z M10 4h1v4h-1z M9 8h1v1h-1z M8 9h2v1h-2z M4 10h4v1h-4z M2 9h2v1h-2z" fill="#F1EFE2"/></svg>
<span class="t" style="left:39px;top:353.19px;font-size:11px;letter-spacing:-0.018px;">4Iron</span>
<svg class="r" style="left:87px;top:357px" width="12" height="12" viewBox="0 0 12 12" shape-rendering="crispEdges"><path d="M2 2h8v8h-8z M4 1h4v10h-4z M1 4h10v4h-10z" fill="#fff"/><path d="M4 0h4v1h-4z M2 1h2v1h-2z M8 1h2v1h-2z M1 2h1v2h-1z M0 4h1v4h-1z M1 8h1v2h-1z" fill="#ACA899"/><path d="M4 1h4v1h-4z M2 2h2v1h-2z M8 2h2v1h-2z M2 3h1v1h-1z M1 4h1v4h-1z M2 8h1v1h-1z" fill="#716F64"/><path d="M10 2h1v2h-1z M11 4h1v4h-1z M10 8h1v2h-1z M8 10h2v1h-2z M4 11h4v1h-4z M2 10h2v1h-2z" fill="#FFFFFF"/><path d="M9 3h1v1h-1z M10 4h1v4h-1z M9 8h1v1h-1z M8 9h2v1h-2z M4 10h4v1h-4z M2 9h2v1h-2z" fill="#F1EFE2"/></svg>
<span class="t" style="left:102px;top:353.19px;font-size:11px;letter-spacing:-0.018px;">5Iron</span>
<svg class="r" style="left:151px;top:356px" width="12" height="12" viewBox="0 0 12 12" shape-rendering="crispEdges"><path d="M2 2h8v8h-8z M4 1h4v10h-4z M1 4h10v4h-10z" fill="#fff"/><path d="M4 0h4v1h-4z M2 1h2v1h-2z M8 1h2v1h-2z M1 2h1v2h-1z M0 4h1v4h-1z M1 8h1v2h-1z" fill="#ACA899"/><path d="M4 1h4v1h-4z M2 2h2v1h-2z M8 2h2v1h-2z M2 3h1v1h-1z M1 4h1v4h-1z M2 8h1v1h-1z" fill="#716F64"/><path d="M10 2h1v2h-1z M11 4h1v4h-1z M10 8h1v2h-1z M8 10h2v1h-2z M4 11h4v1h-4z M2 10h2v1h-2z" fill="#FFFFFF"/><path d="M9 3h1v1h-1z M10 4h1v4h-1z M9 8h1v1h-1z M8 9h2v1h-2z M4 10h4v1h-4z M2 9h2v1h-2z" fill="#F1EFE2"/></svg>
<span class="t" style="left:166px;top:352.19px;font-size:11px;letter-spacing:-0.018px;">6Iron</span>
<div style="position:absolute;left:11px;top:379px;width:215px;height:33px;box-sizing:border-box;border:1px solid #ACA899;"></div>
<div style="position:absolute;left:12px;top:380px;width:215px;height:33px;box-sizing:border-box;border:1px solid #FFFFFF;"></div>
<div style="position:absolute;left:225px;top:379px;width:1px;height:33px;background:#ACA899;"></div>
<div style="position:absolute;left:11px;top:411px;width:215px;height:1px;background:#ACA899;"></div>
<div style="position:absolute;left:22px;top:378px;width:194px;height:4px;background:#ECE9D8;"></div>
<span class="t" style="left:66.5px;top:370.19px;font-size:11px;font-weight:bold;letter-spacing:0.168px;">Wedges&nbsp;Choices</span>
<span class="t" style="left:12px;top:386.19px;font-size:11px;letter-spacing:-0.300px;">PW&nbsp;plus</span>
<div style="position:absolute;left:62px;top:391px;width:11px;height:11px;box-sizing:border-box;background:#fff;border:1px solid;border-color:#ACA899 #FFFFFF #FFFFFF #ACA899;"></div>
<div style="position:absolute;left:63px;top:392px;width:9px;height:9px;box-sizing:border-box;border:1px solid;border-color:#716F64 #F1EFE2 #F1EFE2 #716F64;"></div>
<div style="position:absolute;left:65px;top:395px;width:1px;height:2px;background:#000;"></div>
<div style="position:absolute;left:66px;top:396px;width:1px;height:2px;background:#000;"></div>
<div style="position:absolute;left:67px;top:397px;width:1px;height:2px;background:#000;"></div>
<div style="position:absolute;left:68px;top:396px;width:1px;height:2px;background:#000;"></div>
<div style="position:absolute;left:69px;top:395px;width:1px;height:2px;background:#000;"></div>
<div style="position:absolute;left:70px;top:394px;width:1px;height:2px;background:#000;"></div>
<span class="t" style="left:78.5px;top:387.19px;font-size:11px;letter-spacing:-0.300px;">GW</span>
<div style="position:absolute;left:118px;top:391px;width:11px;height:11px;box-sizing:border-box;background:#fff;border:1px solid;border-color:#ACA899 #FFFFFF #FFFFFF #ACA899;"></div>
<div style="position:absolute;left:119px;top:392px;width:9px;height:9px;box-sizing:border-box;border:1px solid;border-color:#716F64 #F1EFE2 #F1EFE2 #716F64;"></div>
<div style="position:absolute;left:121px;top:395px;width:1px;height:2px;background:#000;"></div>
<div style="position:absolute;left:122px;top:396px;width:1px;height:2px;background:#000;"></div>
<div style="position:absolute;left:123px;top:397px;width:1px;height:2px;background:#000;"></div>
<div style="position:absolute;left:124px;top:396px;width:1px;height:2px;background:#000;"></div>
<div style="position:absolute;left:125px;top:395px;width:1px;height:2px;background:#000;"></div>
<div style="position:absolute;left:126px;top:394px;width:1px;height:2px;background:#000;"></div>
<span class="t" style="left:134.5px;top:387.19px;font-size:11px;letter-spacing:-0.300px;">SW</span>
<div style="position:absolute;left:174px;top:391px;width:11px;height:11px;box-sizing:border-box;background:#fff;border:1px solid;border-color:#ACA899 #FFFFFF #FFFFFF #ACA899;"></div>
<div style="position:absolute;left:175px;top:392px;width:9px;height:9px;box-sizing:border-box;border:1px solid;border-color:#716F64 #F1EFE2 #F1EFE2 #716F64;"></div>
<div style="position:absolute;left:177px;top:395px;width:1px;height:2px;background:#000;"></div>
<div style="position:absolute;left:178px;top:396px;width:1px;height:2px;background:#000;"></div>
<div style="position:absolute;left:179px;top:397px;width:1px;height:2px;background:#000;"></div>
<div style="position:absolute;left:180px;top:396px;width:1px;height:2px;background:#000;"></div>
<div style="position:absolute;left:181px;top:395px;width:1px;height:2px;background:#000;"></div>
<div style="position:absolute;left:182px;top:394px;width:1px;height:2px;background:#000;"></div>
<span class="t" style="left:190px;top:387.19px;font-size:11px;letter-spacing:-0.300px;">LW</span>
<div style="position:absolute;left:11px;top:435px;width:215px;height:97px;box-sizing:border-box;border:1px solid #ACA899;"></div>
<div style="position:absolute;left:12px;top:436px;width:215px;height:97px;box-sizing:border-box;border:1px solid #FFFFFF;"></div>
<div style="position:absolute;left:225px;top:435px;width:1px;height:97px;background:#ACA899;"></div>
<div style="position:absolute;left:11px;top:531px;width:215px;height:1px;background:#ACA899;"></div>
<div style="position:absolute;left:22px;top:434px;width:124px;height:4px;background:#ECE9D8;"></div>
<span class="t" style="left:24px;top:426.19px;font-size:11px;font-weight:bold;letter-spacing:0.192px;">FSChart&nbsp;Base&nbsp;Values</span>
<span class="t" style="left:138px;top:434.19px;font-size:11px;letter-spacing:0.757px;">(+/-)</span>
<span class="t" style="left:20px;top:442.19px;font-size:11px;letter-spacing:-0.300px;">XAxis&nbsp;Base&nbsp;Clublength</span>
<span class="t" style="left:36.5px;top:458.19px;font-size:11px;letter-spacing:-0.300px;">33</span>
<span class="t" style="left:84px;top:458.19px;font-size:11px;letter-spacing:-0.182px;">Inches</span>
<div style="position:absolute;left:141px;top:454px;width:15px;height:11px;box-sizing:border-box;background:#ECE9D8;border:1px solid;border-color:#FFFFFF #7d7b6e #7d7b6e #FFFFFF;"></div>
<div style="position:absolute;left:142px;top:455px;width:13px;height:9px;box-sizing:border-box;border:1px solid;border-color:#F1EFE2 #ACA899 #ACA899 #F1EFE2;"></div>
<div style="position:absolute;left:148px;top:458px;width:1px;height:1px;background:#000;"></div>
<div style="position:absolute;left:147px;top:459px;width:3px;height:1px;background:#000;"></div>
<div style="position:absolute;left:146px;top:460px;width:5px;height:1px;background:#000;"></div>
<div style="position:absolute;left:141px;top:465px;width:15px;height:11px;box-sizing:border-box;background:#ECE9D8;border:1px solid;border-color:#FFFFFF #7d7b6e #7d7b6e #FFFFFF;"></div>
<div style="position:absolute;left:142px;top:466px;width:13px;height:9px;box-sizing:border-box;border:1px solid;border-color:#F1EFE2 #ACA899 #ACA899 #F1EFE2;"></div>
<div style="position:absolute;left:146px;top:469px;width:5px;height:1px;background:#000;"></div>
<div style="position:absolute;left:147px;top:470px;width:3px;height:1px;background:#000;"></div>
<div style="position:absolute;left:148px;top:471px;width:1px;height:1px;background:#000;"></div>
<span class="t" style="left:157px;top:450.19px;font-size:11px;letter-spacing:-0.232px;">1/4&quot;</span>
<span class="t" style="left:138px;top:474.19px;font-size:11px;letter-spacing:0.757px;">(+/-)</span>
<span class="t" style="left:183.5px;top:474.19px;font-size:11px;letter-spacing:0.757px;">(+/-)</span>
<span class="t" style="left:20px;top:482.19px;font-size:11px;letter-spacing:-0.287px;">YAxis&nbsp;Base&nbsp;Frequency</span>
<span class="t" style="left:36.5px;top:498.19px;font-size:11px;letter-spacing:-0.300px;">210</span>
<span class="t" style="left:84px;top:498.19px;font-size:11px;letter-spacing:-0.300px;">CPMs</span>
<div style="position:absolute;left:141px;top:494px;width:15px;height:11px;box-sizing:border-box;background:#ECE9D8;border:1px solid;border-color:#FFFFFF #7d7b6e #7d7b6e #FFFFFF;"></div>
<div style="position:absolute;left:142px;top:495px;width:13px;height:9px;box-sizing:border-box;border:1px solid;border-color:#F1EFE2 #ACA899 #ACA899 #F1EFE2;"></div>
<div style="position:absolute;left:148px;top:498px;width:1px;height:1px;background:#000;"></div>
<div style="position:absolute;left:147px;top:499px;width:3px;height:1px;background:#000;"></div>
<div style="position:absolute;left:146px;top:500px;width:5px;height:1px;background:#000;"></div>
<div style="position:absolute;left:141px;top:505px;width:15px;height:11px;box-sizing:border-box;background:#ECE9D8;border:1px solid;border-color:#FFFFFF #7d7b6e #7d7b6e #FFFFFF;"></div>
<div style="position:absolute;left:142px;top:506px;width:13px;height:9px;box-sizing:border-box;border:1px solid;border-color:#F1EFE2 #ACA899 #ACA899 #F1EFE2;"></div>
<div style="position:absolute;left:146px;top:509px;width:5px;height:1px;background:#000;"></div>
<div style="position:absolute;left:147px;top:510px;width:3px;height:1px;background:#000;"></div>
<div style="position:absolute;left:148px;top:511px;width:1px;height:1px;background:#000;"></div>
<span class="t" style="left:157px;top:490.19px;font-size:11px;letter-spacing:-0.300px;">10cpm</span>
<div style="position:absolute;left:189px;top:494px;width:15px;height:11px;box-sizing:border-box;background:#ECE9D8;border:1px solid;border-color:#FFFFFF #7d7b6e #7d7b6e #FFFFFF;"></div>
<div style="position:absolute;left:190px;top:495px;width:13px;height:9px;box-sizing:border-box;border:1px solid;border-color:#F1EFE2 #ACA899 #ACA899 #F1EFE2;"></div>
<div style="position:absolute;left:196px;top:498px;width:1px;height:1px;background:#000;"></div>
<div style="position:absolute;left:195px;top:499px;width:3px;height:1px;background:#000;"></div>
<div style="position:absolute;left:194px;top:500px;width:5px;height:1px;background:#000;"></div>
<div style="position:absolute;left:189px;top:505px;width:15px;height:11px;box-sizing:border-box;background:#ECE9D8;border:1px solid;border-color:#FFFFFF #7d7b6e #7d7b6e #FFFFFF;"></div>
<div style="position:absolute;left:190px;top:506px;width:13px;height:9px;box-sizing:border-box;border:1px solid;border-color:#F1EFE2 #ACA899 #ACA899 #F1EFE2;"></div>
<div style="position:absolute;left:194px;top:509px;width:5px;height:1px;background:#000;"></div>
<div style="position:absolute;left:195px;top:510px;width:3px;height:1px;background:#000;"></div>
<div style="position:absolute;left:196px;top:511px;width:1px;height:1px;background:#000;"></div>
<div style="position:absolute;left:11px;top:539px;width:215px;height:25px;box-sizing:border-box;border:1px solid #ACA899;"></div>
<div style="position:absolute;left:12px;top:540px;width:215px;height:25px;box-sizing:border-box;border:1px solid #FFFFFF;"></div>
<div style="position:absolute;left:225px;top:539px;width:1px;height:25px;background:#ACA899;"></div>
<div style="position:absolute;left:11px;top:563px;width:215px;height:1px;background:#ACA899;"></div>
<div style="position:absolute;left:22px;top:538px;width:148px;height:4px;background:#ECE9D8;"></div>
<span class="t" style="left:24.5px;top:530.19px;font-size:11px;font-weight:bold;letter-spacing:0.593px;">Chart/DataSheet&nbsp;to&nbsp;View</span>
<svg class="r" style="left:22px;top:548px" width="12" height="12" viewBox="0 0 12 12" shape-rendering="crispEdges"><path d="M2 2h8v8h-8z M4 1h4v10h-4z M1 4h10v4h-10z" fill="#fff"/><path d="M4 0h4v1h-4z M2 1h2v1h-2z M8 1h2v1h-2z M1 2h1v2h-1z M0 4h1v4h-1z M1 8h1v2h-1z" fill="#ACA899"/><path d="M4 1h4v1h-4z M2 2h2v1h-2z M8 2h2v1h-2z M2 3h1v1h-1z M1 4h1v4h-1z M2 8h1v1h-1z" fill="#716F64"/><path d="M10 2h1v2h-1z M11 4h1v4h-1z M10 8h1v2h-1z M8 10h2v1h-2z M4 11h4v1h-4z M2 10h2v1h-2z" fill="#FFFFFF"/><path d="M9 3h1v1h-1z M10 4h1v4h-1z M9 8h1v1h-1z M8 9h2v1h-2z M4 10h4v1h-4z M2 9h2v1h-2z" fill="#F1EFE2"/></svg>
<span class="t" style="left:38px;top:545.19px;font-size:11px;letter-spacing:-0.272px;">ZonesFrequency</span>
<svg class="r" style="left:134px;top:548px" width="12" height="12" viewBox="0 0 12 12" shape-rendering="crispEdges"><path d="M2 2h8v8h-8z M4 1h4v10h-4z M1 4h10v4h-10z" fill="#fff"/><path d="M4 0h4v1h-4z M2 1h2v1h-2z M8 1h2v1h-2z M1 2h1v2h-1z M0 4h1v4h-1z M1 8h1v2h-1z" fill="#ACA899"/><path d="M4 1h4v1h-4z M2 2h2v1h-2z M8 2h2v1h-2z M2 3h1v1h-1z M1 4h1v4h-1z M2 8h1v1h-1z" fill="#716F64"/><path d="M10 2h1v2h-1z M11 4h1v4h-1z M10 8h1v2h-1z M8 10h2v1h-2z M4 11h4v1h-4z M2 10h2v1h-2z" fill="#FFFFFF"/><path d="M9 3h1v1h-1z M10 4h1v4h-1z M9 8h1v1h-1z M8 9h2v1h-2z M4 10h4v1h-4z M2 9h2v1h-2z" fill="#F1EFE2"/></svg>
<span class="t" style="left:150px;top:545.19px;font-size:11px;letter-spacing:-0.300px;">SpecsSheet</span>
<div style="position:absolute;left:11px;top:565px;width:64px;height:25px;box-sizing:border-box;background:#ECE9D8;border:1px solid;border-color:#FFFFFF #716F64 #716F64 #FFFFFF;"></div>
<div style="position:absolute;left:12px;top:566px;width:62px;height:23px;box-sizing:border-box;border:1px solid;border-color:#F1EFE2 #ACA899 #ACA899 #F1EFE2;"></div>
<span class="t" style="left:16.5px;top:566.19px;font-size:11px;font-weight:bold;letter-spacing:-0.287px;">Exit&nbsp;Panel</span>
<div style="position:absolute;left:235px;top:35px;width:271px;height:153px;box-sizing:border-box;border:1px solid #ACA899;"></div>
<div style="position:absolute;left:236px;top:36px;width:271px;height:153px;box-sizing:border-box;border:1px solid #FFFFFF;"></div>
<div style="position:absolute;left:505px;top:35px;width:1px;height:153px;background:#ACA899;"></div>
<div style="position:absolute;left:235px;top:187px;width:271px;height:1px;background:#ACA899;"></div>
<div style="position:absolute;left:246px;top:34px;width:248px;height:4px;background:#ECE9D8;"></div>
<span class="t" style="left:315px;top:26.19px;font-size:11px;font-weight:bold;letter-spacing:0.499px;">Woods&nbsp;Information</span>
<span class="t" style="left:236px;top:42.19px;font-size:11px;letter-spacing:-0.138px;">Driver&nbsp;CustomFit&nbsp;Frequency:</span>
<span class="t" style="left:244px;top:58.19px;font-size:11px;letter-spacing:0.462px;">(+/-&nbsp;10)</span>
<span class="t" style="left:340.3px;top:58.19px;font-size:11px;letter-spacing:0.392px;">(+/-&nbsp;1)</span>
<span class="t" style="left:380.3px;top:58.19px;font-size:11px;letter-spacing:0.471px;">(+/-&nbsp;.1)</span>
<div style="position:absolute;left:245px;top:77px;width:16px;height:12px;box-sizing:border-box;background:#ECE9D8;border:1px solid;border-color:#FFFFFF #7d7b6e #7d7b6e #FFFFFF;"></div>
<div style="position:absolute;left:246px;top:78px;width:14px;height:10px;box-sizing:border-box;border:1px solid;border-color:#F1EFE2 #ACA899 #ACA899 #F1EFE2;"></div>
<div style="position:absolute;left:252px;top:81px;width:1px;height:1px;background:#000;"></div>
<div style="position:absolute;left:251px;top:82px;width:3px;height:1px;background:#000;"></div>
<div style="position:absolute;left:250px;top:83px;width:5px;height:1px;background:#000;"></div>
<div style="position:absolute;left:245px;top:89px;width:16px;height:12px;box-sizing:border-box;background:#ECE9D8;border:1px solid;border-color:#FFFFFF #7d7b6e #7d7b6e #FFFFFF;"></div>
<div style="position:absolute;left:246px;top:90px;width:14px;height:10px;box-sizing:border-box;border:1px solid;border-color:#F1EFE2 #ACA899 #ACA899 #F1EFE2;"></div>
<div style="position:absolute;left:250px;top:93px;width:5px;height:1px;background:#000;"></div>
<div style="position:absolute;left:251px;top:94px;width:3px;height:1px;background:#000;"></div>
<div style="position:absolute;left:252px;top:95px;width:1px;height:1px;background:#000;"></div>
<div style="position:absolute;left:357px;top:77px;width:16px;height:12px;box-sizing:border-box;background:#ECE9D8;border:1px solid;border-color:#FFFFFF #7d7b6e #7d7b6e #FFFFFF;"></div>
<div style="position:absolute;left:358px;top:78px;width:14px;height:10px;box-sizing:border-box;border:1px solid;border-color:#F1EFE2 #ACA899 #ACA899 #F1EFE2;"></div>
<div style="position:absolute;left:364px;top:81px;width:1px;height:1px;background:#000;"></div>
<div style="position:absolute;left:363px;top:82px;width:3px;height:1px;background:#000;"></div>
<div style="position:absolute;left:362px;top:83px;width:5px;height:1px;background:#000;"></div>
<div style="position:absolute;left:357px;top:89px;width:16px;height:12px;box-sizing:border-box;background:#ECE9D8;border:1px solid;border-color:#FFFFFF #7d7b6e #7d7b6e #FFFFFF;"></div>
<div style="position:absolute;left:358px;top:90px;width:14px;height:10px;box-sizing:border-box;border:1px solid;border-color:#F1EFE2 #ACA899 #ACA899 #F1EFE2;"></div>
<div style="position:absolute;left:362px;top:93px;width:5px;height:1px;background:#000;"></div>
<div style="position:absolute;left:363px;top:94px;width:3px;height:1px;background:#000;"></div>
<div style="position:absolute;left:364px;top:95px;width:1px;height:1px;background:#000;"></div>
<div style="position:absolute;left:381px;top:77px;width:16px;height:12px;box-sizing:border-box;background:#ECE9D8;border:1px solid;border-color:#FFFFFF #7d7b6e #7d7b6e #FFFFFF;"></div>
<div style="position:absolute;left:382px;top:78px;width:14px;height:10px;box-sizing:border-box;border:1px solid;border-color:#F1EFE2 #ACA899 #ACA899 #F1EFE2;"></div>
<div style="position:absolute;left:388px;top:81px;width:1px;height:1px;background:#000;"></div>
<div style="position:absolute;left:387px;top:82px;width:3px;height:1px;background:#000;"></div>
<div style="position:absolute;left:386px;top:83px;width:5px;height:1px;background:#000;"></div>
<div style="position:absolute;left:381px;top:89px;width:16px;height:12px;box-sizing:border-box;background:#ECE9D8;border:1px solid;border-color:#FFFFFF #7d7b6e #7d7b6e #FFFFFF;"></div>
<div style="position:absolute;left:382px;top:90px;width:14px;height:10px;box-sizing:border-box;border:1px solid;border-color:#F1EFE2 #ACA899 #ACA899 #F1EFE2;"></div>
<div style="position:absolute;left:386px;top:93px;width:5px;height:1px;background:#000;"></div>
<div style="position:absolute;left:387px;top:94px;width:3px;height:1px;background:#000;"></div>
<div style="position:absolute;left:388px;top:95px;width:1px;height:1px;background:#000;"></div>
<span class="t" style="left:268.3px;top:74.19px;font-size:11px;letter-spacing:-0.300px;">250.0&nbsp;CPM</span>
<span class="t" style="left:260.5px;top:98.19px;font-size:11px;letter-spacing:-0.007px;">[6.7&nbsp;Flex&nbsp;/&nbsp;X&nbsp;&nbsp;Flex]</span>
<span class="t" style="left:428px;top:56.53px;font-size:10px;font-weight:bold;letter-spacing:-0.018px;">FM&nbsp;clamp</span>
<svg class="r" style="left:431px;top:81px" width="12" height="12" viewBox="0 0 12 12" shape-rendering="crispEdges"><path d="M2 2h8v8h-8z M4 1h4v10h-4z M1 4h10v4h-10z" fill="#fff"/><path d="M4 0h4v1h-4z M2 1h2v1h-2z M8 1h2v1h-2z M1 2h1v2h-1z M0 4h1v4h-1z M1 8h1v2h-1z" fill="#ACA899"/><path d="M4 1h4v1h-4z M2 2h2v1h-2z M8 2h2v1h-2z M2 3h1v1h-1z M1 4h1v4h-1z M2 8h1v1h-1z" fill="#716F64"/><path d="M10 2h1v2h-1z M11 4h1v4h-1z M10 8h1v2h-1z M8 10h2v1h-2z M4 11h4v1h-4z M2 10h2v1h-2z" fill="#FFFFFF"/><path d="M9 3h1v1h-1z M10 4h1v4h-1z M9 8h1v1h-1z M8 9h2v1h-2z M4 10h4v1h-4z M2 9h2v1h-2z" fill="#F1EFE2"/><rect x="4" y="5" width="4" height="2" fill="#000"/><rect x="5" y="4" width="2" height="4" fill="#000"/></svg>
<span class="t" style="left:446px;top:77.19px;font-size:11px;letter-spacing:-0.300px;">Graphite</span>
<svg class="r" style="left:431px;top:97px" width="12" height="12" viewBox="0 0 12 12" shape-rendering="crispEdges"><path d="M2 2h8v8h-8z M4 1h4v10h-4z M1 4h10v4h-10z" fill="#fff"/><path d="M4 0h4v1h-4z M2 1h2v1h-2z M8 1h2v1h-2z M1 2h1v2h-1z M0 4h1v4h-1z M1 8h1v2h-1z" fill="#ACA899"/><path d="M4 1h4v1h-4z M2 2h2v1h-2z M8 2h2v1h-2z M2 3h1v1h-1z M1 4h1v4h-1z M2 8h1v1h-1z" fill="#716F64"/><path d="M10 2h1v2h-1z M11 4h1v4h-1z M10 8h1v2h-1z M8 10h2v1h-2z M4 11h4v1h-4z M2 10h2v1h-2z" fill="#FFFFFF"/><path d="M9 3h1v1h-1z M10 4h1v4h-1z M9 8h1v1h-1z M8 9h2v1h-2z M4 10h4v1h-4z M2 9h2v1h-2z" fill="#F1EFE2"/></svg>
<span class="t" style="left:446.5px;top:93.19px;font-size:11px;letter-spacing:-0.300px;">Steel</span>
<div style="position:absolute;left:237px;top:123px;width:223px;height:65px;box-sizing:border-box;border:1px solid #ACA899;"></div>
<div style="position:absolute;left:238px;top:124px;width:223px;height:65px;box-sizing:border-box;border:1px solid #FFFFFF;"></div>
<div style="position:absolute;left:459px;top:123px;width:1px;height:65px;background:#ACA899;"></div>
<div style="position:absolute;left:237px;top:187px;width:223px;height:1px;background:#ACA899;"></div>
<div style="position:absolute;left:247px;top:122px;width:201px;height:4px;background:#ECE9D8;"></div>
<span class="t" style="left:250px;top:114.19px;font-size:11px;font-weight:bold;letter-spacing:0.347px;">View&nbsp;closest&nbsp;match&nbsp;of&nbsp;WoodShafts</span>
<div style="position:absolute;left:238px;top:133px;width:49px;height:24px;box-sizing:border-box;background:#ECE9D8;border:1px solid;border-color:#FFFFFF #716F64 #716F64 #FFFFFF;"></div>
<div style="position:absolute;left:239px;top:134px;width:47px;height:22px;box-sizing:border-box;border:1px solid;border-color:#F1EFE2 #ACA899 #ACA899 #F1EFE2;"></div>
<span class="t" style="left:247px;top:136.19px;font-size:11px;letter-spacing:-0.300px;">(CPM)</span>
<div style="position:absolute;left:303px;top:133px;width:56px;height:24px;box-sizing:border-box;background:#ECE9D8;border:1px solid;border-color:#FFFFFF #716F64 #716F64 #FFFFFF;"></div>
<div style="position:absolute;left:304px;top:134px;width:54px;height:22px;box-sizing:border-box;border:1px solid;border-color:#F1EFE2 #ACA899 #ACA899 #F1EFE2;"></div>
<span class="t" style="left:315.5px;top:136.19px;font-size:11px;letter-spacing:-0.300px;">(MPH)</span>
<div style="position:absolute;left:391px;top:133px;width:56px;height:24px;box-sizing:border-box;background:#ECE9D8;border:1px solid;border-color:#FFFFFF #716F64 #716F64 #FFFFFF;"></div>
<div style="position:absolute;left:392px;top:134px;width:54px;height:22px;box-sizing:border-box;border:1px solid;border-color:#F1EFE2 #ACA899 #ACA899 #F1EFE2;"></div>
<span class="t" style="left:399.5px;top:136.19px;font-size:11px;letter-spacing:-0.300px;">(GRAM)</span>
<div style="position:absolute;left:303px;top:157px;width:15px;height:12px;box-sizing:border-box;background:#ECE9D8;border:1px solid;border-color:#FFFFFF #7d7b6e #7d7b6e #FFFFFF;"></div>
<div style="position:absolute;left:304px;top:158px;width:13px;height:10px;box-sizing:border-box;border:1px solid;border-color:#F1EFE2 #ACA899 #ACA899 #F1EFE2;"></div>
<div style="position:absolute;left:310px;top:161px;width:1px;height:1px;background:#000;"></div>
<div style="position:absolute;left:309px;top:162px;width:3px;height:1px;background:#000;"></div>
<div style="position:absolute;left:308px;top:163px;width:5px;height:1px;background:#000;"></div>
<div style="position:absolute;left:303px;top:169px;width:15px;height:11px;box-sizing:border-box;background:#ECE9D8;border:1px solid;border-color:#FFFFFF #7d7b6e #7d7b6e #FFFFFF;"></div>
<div style="position:absolute;left:304px;top:170px;width:13px;height:9px;box-sizing:border-box;border:1px solid;border-color:#F1EFE2 #ACA899 #ACA899 #F1EFE2;"></div>
<div style="position:absolute;left:308px;top:173px;width:5px;height:1px;background:#000;"></div>
<div style="position:absolute;left:309px;top:174px;width:3px;height:1px;background:#000;"></div>
<div style="position:absolute;left:310px;top:175px;width:1px;height:1px;background:#000;"></div>
<span class="t" style="left:319.3px;top:154.19px;font-size:11px;letter-spacing:-0.300px;">100</span>
<div style="position:absolute;left:343px;top:157px;width:15px;height:12px;box-sizing:border-box;background:#ECE9D8;border:1px solid;border-color:#FFFFFF #7d7b6e #7d7b6e #FFFFFF;"></div>
<div style="position:absolute;left:344px;top:158px;width:13px;height:10px;box-sizing:border-box;border:1px solid;border-color:#F1EFE2 #ACA899 #ACA899 #F1EFE2;"></div>
<div style="position:absolute;left:350px;top:161px;width:1px;height:1px;background:#000;"></div>
<div style="position:absolute;left:349px;top:162px;width:3px;height:1px;background:#000;"></div>
<div style="position:absolute;left:348px;top:163px;width:5px;height:1px;background:#000;"></div>
<div style="position:absolute;left:343px;top:169px;width:15px;height:11px;box-sizing:border-box;background:#ECE9D8;border:1px solid;border-color:#FFFFFF #7d7b6e #7d7b6e #FFFFFF;"></div>
<div style="position:absolute;left:344px;top:170px;width:13px;height:9px;box-sizing:border-box;border:1px solid;border-color:#F1EFE2 #ACA899 #ACA899 #F1EFE2;"></div>
<div style="position:absolute;left:348px;top:173px;width:5px;height:1px;background:#000;"></div>
<div style="position:absolute;left:349px;top:174px;width:3px;height:1px;background:#000;"></div>
<div style="position:absolute;left:350px;top:175px;width:1px;height:1px;background:#000;"></div>
<div style="position:absolute;left:391px;top:157px;width:15px;height:12px;box-sizing:border-box;background:#ECE9D8;border:1px solid;border-color:#FFFFFF #7d7b6e #7d7b6e #FFFFFF;"></div>
<div style="position:absolute;left:392px;top:158px;width:13px;height:10px;box-sizing:border-box;border:1px solid;border-color:#F1EFE2 #ACA899 #ACA899 #F1EFE2;"></div>
<div style="position:absolute;left:398px;top:161px;width:1px;height:1px;background:#000;"></div>
<div style="position:absolute;left:397px;top:162px;width:3px;height:1px;background:#000;"></div>
<div style="position:absolute;left:396px;top:163px;width:5px;height:1px;background:#000;"></div>
<div style="position:absolute;left:391px;top:169px;width:15px;height:11px;box-sizing:border-box;background:#ECE9D8;border:1px solid;border-color:#FFFFFF #7d7b6e #7d7b6e #FFFFFF;"></div>
<div style="position:absolute;left:392px;top:170px;width:13px;height:9px;box-sizing:border-box;border:1px solid;border-color:#F1EFE2 #ACA899 #ACA899 #F1EFE2;"></div>
<div style="position:absolute;left:396px;top:173px;width:5px;height:1px;background:#000;"></div>
<div style="position:absolute;left:397px;top:174px;width:3px;height:1px;background:#000;"></div>
<div style="position:absolute;left:398px;top:175px;width:1px;height:1px;background:#000;"></div>
<span class="t" style="left:407.3px;top:154.19px;font-size:11px;letter-spacing:-0.300px;">70</span>
<div style="position:absolute;left:431px;top:157px;width:15px;height:12px;box-sizing:border-box;background:#ECE9D8;border:1px solid;border-color:#FFFFFF #7d7b6e #7d7b6e #FFFFFF;"></div>
<div style="position:absolute;left:432px;top:158px;width:13px;height:10px;box-sizing:border-box;border:1px solid;border-color:#F1EFE2 #ACA899 #ACA899 #F1EFE2;"></div>
<div style="position:absolute;left:438px;top:161px;width:1px;height:1px;background:#000;"></div>
<div style="position:absolute;left:437px;top:162px;width:3px;height:1px;background:#000;"></div>
<div style="position:absolute;left:436px;top:163px;width:5px;height:1px;background:#000;"></div>
<div style="position:absolute;left:431px;top:169px;width:15px;height:11px;box-sizing:border-box;background:#ECE9D8;border:1px solid;border-color:#FFFFFF #7d7b6e #7d7b6e #FFFFFF;"></div>
<div style="position:absolute;left:432px;top:170px;width:13px;height:9px;box-sizing:border-box;border:1px solid;border-color:#F1EFE2 #ACA899 #ACA899 #F1EFE2;"></div>
<div style="position:absolute;left:436px;top:173px;width:5px;height:1px;background:#000;"></div>
<div style="position:absolute;left:437px;top:174px;width:3px;height:1px;background:#000;"></div>
<div style="position:absolute;left:438px;top:175px;width:1px;height:1px;background:#000;"></div>
<div style="position:absolute;left:461px;top:125px;width:44px;height:62px;box-sizing:border-box;background:#ECE9D8;border:1px solid;border-color:#FFFFFF #ECE9D8 #ECE9D8 #FFFFFF;"></div>
<div style="position:absolute;left:462px;top:126px;width:42px;height:60px;box-sizing:border-box;border:1px solid;border-color:#F1EFE2 #ECE9D8 #ECE9D8 #F1EFE2;"></div>
<span class="t" style="left:471.3px;top:147.19px;font-size:11px;letter-spacing:-0.300px;">Grips</span>
<div style="position:absolute;left:515px;top:35px;width:271px;height:153px;box-sizing:border-box;border:1px solid #ACA899;"></div>
<div style="position:absolute;left:516px;top:36px;width:271px;height:153px;box-sizing:border-box;border:1px solid #FFFFFF;"></div>
<div style="position:absolute;left:785px;top:35px;width:1px;height:153px;background:#ACA899;"></div>
<div style="position:absolute;left:515px;top:187px;width:271px;height:1px;background:#ACA899;"></div>
<div style="position:absolute;left:526px;top:34px;width:249px;height:4px;background:#ECE9D8;"></div>
<span class="t" style="left:594.5px;top:26.19px;font-size:11px;font-weight:bold;letter-spacing:0.628px;">Irons&nbsp;Information</span>
<span class="t" style="left:516px;top:42.19px;font-size:11px;letter-spacing:-0.093px;">5Iron&nbsp;CustomFit&nbsp;Frequency:</span>
<span class="t" style="left:524px;top:58.19px;font-size:11px;letter-spacing:0.462px;">(+/-&nbsp;10)</span>
<span class="t" style="left:620.3px;top:58.19px;font-size:11px;letter-spacing:0.392px;">(+/-&nbsp;1)</span>
<span class="t" style="left:660.3px;top:58.19px;font-size:11px;letter-spacing:0.471px;">(+/-&nbsp;.1)</span>
<div style="position:absolute;left:525px;top:77px;width:16px;height:12px;box-sizing:border-box;background:#ECE9D8;border:1px solid;border-color:#FFFFFF #7d7b6e #7d7b6e #FFFFFF;"></div>
<div style="position:absolute;left:526px;top:78px;width:14px;height:10px;box-sizing:border-box;border:1px solid;border-color:#F1EFE2 #ACA899 #ACA899 #F1EFE2;"></div>
<div style="position:absolute;left:528px;top:80px;width:10px;height:6px;box-sizing:border-box;border:1px solid #000;"></div>
<div style="position:absolute;left:532px;top:82px;width:2px;height:1px;background:#000;"></div>
<div style="position:absolute;left:531px;top:83px;width:4px;height:1px;background:#000;"></div>
<div style="position:absolute;left:530px;top:84px;width:6px;height:1px;background:#000;"></div>
<div style="position:absolute;left:525px;top:89px;width:16px;height:12px;box-sizing:border-box;background:#ECE9D8;border:1px solid;border-color:#FFFFFF #7d7b6e #7d7b6e #FFFFFF;"></div>
<div style="position:absolute;left:526px;top:90px;width:14px;height:10px;box-sizing:border-box;border:1px solid;border-color:#F1EFE2 #ACA899 #ACA899 #F1EFE2;"></div>
<div style="position:absolute;left:528px;top:92px;width:10px;height:6px;box-sizing:border-box;border:1px solid #000;"></div>
<div style="position:absolute;left:530px;top:93px;width:6px;height:1px;background:#000;"></div>
<div style="position:absolute;left:531px;top:94px;width:4px;height:1px;background:#000;"></div>
<div style="position:absolute;left:532px;top:95px;width:2px;height:1px;background:#000;"></div>
<div style="position:absolute;left:637px;top:77px;width:16px;height:12px;box-sizing:border-box;background:#ECE9D8;border:1px solid;border-color:#FFFFFF #7d7b6e #7d7b6e #FFFFFF;"></div>
<div style="position:absolute;left:638px;top:78px;width:14px;height:10px;box-sizing:border-box;border:1px solid;border-color:#F1EFE2 #ACA899 #ACA899 #F1EFE2;"></div>
<div style="position:absolute;left:644px;top:81px;width:1px;height:1px;background:#000;"></div>
<div style="position:absolute;left:643px;top:82px;width:3px;height:1px;background:#000;"></div>
<div style="position:absolute;left:642px;top:83px;width:5px;height:1px;background:#000;"></div>
<div style="position:absolute;left:637px;top:89px;width:16px;height:12px;box-sizing:border-box;background:#ECE9D8;border:1px solid;border-color:#FFFFFF #7d7b6e #7d7b6e #FFFFFF;"></div>
<div style="position:absolute;left:638px;top:90px;width:14px;height:10px;box-sizing:border-box;border:1px solid;border-color:#F1EFE2 #ACA899 #ACA899 #F1EFE2;"></div>
<div style="position:absolute;left:642px;top:93px;width:5px;height:1px;background:#000;"></div>
<div style="position:absolute;left:643px;top:94px;width:3px;height:1px;background:#000;"></div>
<div style="position:absolute;left:644px;top:95px;width:1px;height:1px;background:#000;"></div>
<div style="position:absolute;left:661px;top:77px;width:16px;height:12px;box-sizing:border-box;background:#ECE9D8;border:1px solid;border-color:#FFFFFF #7d7b6e #7d7b6e #FFFFFF;"></div>
<div style="position:absolute;left:662px;top:78px;width:14px;height:10px;box-sizing:border-box;border:1px solid;border-color:#F1EFE2 #ACA899 #ACA899 #F1EFE2;"></div>
<div style="position:absolute;left:668px;top:81px;width:1px;height:1px;background:#000;"></div>
<div style="position:absolute;left:667px;top:82px;width:3px;height:1px;background:#000;"></div>
<div style="position:absolute;left:666px;top:83px;width:5px;height:1px;background:#000;"></div>
<div style="position:absolute;left:661px;top:89px;width:16px;height:12px;box-sizing:border-box;background:#ECE9D8;border:1px solid;border-color:#FFFFFF #7d7b6e #7d7b6e #FFFFFF;"></div>
<div style="position:absolute;left:662px;top:90px;width:14px;height:10px;box-sizing:border-box;border:1px solid;border-color:#F1EFE2 #ACA899 #ACA899 #F1EFE2;"></div>
<div style="position:absolute;left:666px;top:93px;width:5px;height:1px;background:#000;"></div>
<div style="position:absolute;left:667px;top:94px;width:3px;height:1px;background:#000;"></div>
<div style="position:absolute;left:668px;top:95px;width:1px;height:1px;background:#000;"></div>
<span class="t" style="left:548.3px;top:74.19px;font-size:11px;letter-spacing:-0.300px;">297.3&nbsp;CPM</span>
<span class="t" style="left:540.5px;top:98.19px;font-size:11px;letter-spacing:0.073px;">[5.4&nbsp;Flex&nbsp;/&nbsp;R+&nbsp;Flex]</span>
<span class="t" style="left:708px;top:56.53px;font-size:10px;font-weight:bold;letter-spacing:-0.018px;">FM&nbsp;clamp</span>
<svg class="r" style="left:711px;top:81px" width="12" height="12" viewBox="0 0 12 12" shape-rendering="crispEdges"><path d="M2 2h8v8h-8z M4 1h4v10h-4z M1 4h10v4h-10z" fill="#fff"/><path d="M4 0h4v1h-4z M2 1h2v1h-2z M8 1h2v1h-2z M1 2h1v2h-1z M0 4h1v4h-1z M1 8h1v2h-1z" fill="#ACA899"/><path d="M4 1h4v1h-4z M2 2h2v1h-2z M8 2h2v1h-2z M2 3h1v1h-1z M1 4h1v4h-1z M2 8h1v1h-1z" fill="#716F64"/><path d="M10 2h1v2h-1z M11 4h1v4h-1z M10 8h1v2h-1z M8 10h2v1h-2z M4 11h4v1h-4z M2 10h2v1h-2z" fill="#FFFFFF"/><path d="M9 3h1v1h-1z M10 4h1v4h-1z M9 8h1v1h-1z M8 9h2v1h-2z M4 10h4v1h-4z M2 9h2v1h-2z" fill="#F1EFE2"/></svg>
<span class="t" style="left:726px;top:77.19px;font-size:11px;letter-spacing:-0.300px;">Graphite</span>
<svg class="r" style="left:711px;top:97px" width="12" height="12" viewBox="0 0 12 12" shape-rendering="crispEdges"><path d="M2 2h8v8h-8z M4 1h4v10h-4z M1 4h10v4h-10z" fill="#fff"/><path d="M4 0h4v1h-4z M2 1h2v1h-2z M8 1h2v1h-2z M1 2h1v2h-1z M0 4h1v4h-1z M1 8h1v2h-1z" fill="#ACA899"/><path d="M4 1h4v1h-4z M2 2h2v1h-2z M8 2h2v1h-2z M2 3h1v1h-1z M1 4h1v4h-1z M2 8h1v1h-1z" fill="#716F64"/><path d="M10 2h1v2h-1z M11 4h1v4h-1z M10 8h1v2h-1z M8 10h2v1h-2z M4 11h4v1h-4z M2 10h2v1h-2z" fill="#FFFFFF"/><path d="M9 3h1v1h-1z M10 4h1v4h-1z M9 8h1v1h-1z M8 9h2v1h-2z M4 10h4v1h-4z M2 9h2v1h-2z" fill="#F1EFE2"/><rect x="4" y="5" width="4" height="2" fill="#000"/><rect x="5" y="4" width="2" height="4" fill="#000"/></svg>
<span class="t" style="left:726.5px;top:93.19px;font-size:11px;letter-spacing:-0.300px;">Steel</span>
<div style="position:absolute;left:517px;top:123px;width:223px;height:65px;box-sizing:border-box;border:1px solid #ACA899;"></div>
<div style="position:absolute;left:518px;top:124px;width:223px;height:65px;box-sizing:border-box;border:1px solid #FFFFFF;"></div>
<div style="position:absolute;left:739px;top:123px;width:1px;height:65px;background:#ACA899;"></div>
<div style="position:absolute;left:517px;top:187px;width:223px;height:1px;background:#ACA899;"></div>
<div style="position:absolute;left:527px;top:122px;width:193px;height:4px;background:#ECE9D8;"></div>
<span class="t" style="left:530px;top:114.19px;font-size:11px;font-weight:bold;letter-spacing:0.381px;">View&nbsp;closest&nbsp;match&nbsp;of&nbsp;IronShafts</span>
<div style="position:absolute;left:518px;top:133px;width:49px;height:24px;box-sizing:border-box;background:#ECE9D8;border:1px solid;border-color:#FFFFFF #716F64 #716F64 #FFFFFF;"></div>
<div style="position:absolute;left:519px;top:134px;width:47px;height:22px;box-sizing:border-box;border:1px solid;border-color:#F1EFE2 #ACA899 #ACA899 #F1EFE2;"></div>
<span class="t" style="left:527px;top:136.19px;font-size:11px;letter-spacing:-0.300px;">(CPM)</span>
<div style="position:absolute;left:583px;top:133px;width:56px;height:24px;box-sizing:border-box;background:#ECE9D8;border:1px solid;border-color:#FFFFFF #716F64 #716F64 #FFFFFF;"></div>
<div style="position:absolute;left:584px;top:134px;width:54px;height:22px;box-sizing:border-box;border:1px solid;border-color:#F1EFE2 #ACA899 #ACA899 #F1EFE2;"></div>
<span class="t" style="left:595.5px;top:136.19px;font-size:11px;letter-spacing:-0.300px;">(MPH)</span>
<div style="position:absolute;left:671px;top:133px;width:56px;height:24px;box-sizing:border-box;background:#ECE9D8;border:1px solid;border-color:#FFFFFF #716F64 #716F64 #FFFFFF;"></div>
<div style="position:absolute;left:672px;top:134px;width:54px;height:22px;box-sizing:border-box;border:1px solid;border-color:#F1EFE2 #ACA899 #ACA899 #F1EFE2;"></div>
<span class="t" style="left:679.5px;top:136.19px;font-size:11px;letter-spacing:-0.300px;">(GRAM)</span>
<div style="position:absolute;left:583px;top:157px;width:15px;height:12px;box-sizing:border-box;background:#ECE9D8;border:1px solid;border-color:#FFFFFF #7d7b6e #7d7b6e #FFFFFF;"></div>
<div style="position:absolute;left:584px;top:158px;width:13px;height:10px;box-sizing:border-box;border:1px solid;border-color:#F1EFE2 #ACA899 #ACA899 #F1EFE2;"></div>
<div style="position:absolute;left:590px;top:161px;width:1px;height:1px;background:#000;"></div>
<div style="position:absolute;left:589px;top:162px;width:3px;height:1px;background:#000;"></div>
<div style="position:absolute;left:588px;top:163px;width:5px;height:1px;background:#000;"></div>
<div style="position:absolute;left:583px;top:169px;width:15px;height:11px;box-sizing:border-box;background:#ECE9D8;border:1px solid;border-color:#FFFFFF #7d7b6e #7d7b6e #FFFFFF;"></div>
<div style="position:absolute;left:584px;top:170px;width:13px;height:9px;box-sizing:border-box;border:1px solid;border-color:#F1EFE2 #ACA899 #ACA899 #F1EFE2;"></div>
<div style="position:absolute;left:588px;top:173px;width:5px;height:1px;background:#000;"></div>
<div style="position:absolute;left:589px;top:174px;width:3px;height:1px;background:#000;"></div>
<div style="position:absolute;left:590px;top:175px;width:1px;height:1px;background:#000;"></div>
<span class="t" style="left:599.3px;top:154.19px;font-size:11px;letter-spacing:-0.300px;">85</span>
<div style="position:absolute;left:623px;top:157px;width:15px;height:12px;box-sizing:border-box;background:#ECE9D8;border:1px solid;border-color:#FFFFFF #7d7b6e #7d7b6e #FFFFFF;"></div>
<div style="position:absolute;left:624px;top:158px;width:13px;height:10px;box-sizing:border-box;border:1px solid;border-color:#F1EFE2 #ACA899 #ACA899 #F1EFE2;"></div>
<div style="position:absolute;left:630px;top:161px;width:1px;height:1px;background:#000;"></div>
<div style="position:absolute;left:629px;top:162px;width:3px;height:1px;background:#000;"></div>
<div style="position:absolute;left:628px;top:163px;width:5px;height:1px;background:#000;"></div>
<div style="position:absolute;left:623px;top:169px;width:15px;height:11px;box-sizing:border-box;background:#ECE9D8;border:1px solid;border-color:#FFFFFF #7d7b6e #7d7b6e #FFFFFF;"></div>
<div style="position:absolute;left:624px;top:170px;width:13px;height:9px;box-sizing:border-box;border:1px solid;border-color:#F1EFE2 #ACA899 #ACA899 #F1EFE2;"></div>
<div style="position:absolute;left:628px;top:173px;width:5px;height:1px;background:#000;"></div>
<div style="position:absolute;left:629px;top:174px;width:3px;height:1px;background:#000;"></div>
<div style="position:absolute;left:630px;top:175px;width:1px;height:1px;background:#000;"></div>
<div style="position:absolute;left:671px;top:157px;width:15px;height:12px;box-sizing:border-box;background:#ECE9D8;border:1px solid;border-color:#FFFFFF #7d7b6e #7d7b6e #FFFFFF;"></div>
<div style="position:absolute;left:672px;top:158px;width:13px;height:10px;box-sizing:border-box;border:1px solid;border-color:#F1EFE2 #ACA899 #ACA899 #F1EFE2;"></div>
<div style="position:absolute;left:678px;top:161px;width:1px;height:1px;background:#000;"></div>
<div style="position:absolute;left:677px;top:162px;width:3px;height:1px;background:#000;"></div>
<div style="position:absolute;left:676px;top:163px;width:5px;height:1px;background:#000;"></div>
<div style="position:absolute;left:671px;top:169px;width:15px;height:11px;box-sizing:border-box;background:#ECE9D8;border:1px solid;border-color:#FFFFFF #7d7b6e #7d7b6e #FFFFFF;"></div>
<div style="position:absolute;left:672px;top:170px;width:13px;height:9px;box-sizing:border-box;border:1px solid;border-color:#F1EFE2 #ACA899 #ACA899 #F1EFE2;"></div>
<div style="position:absolute;left:676px;top:173px;width:5px;height:1px;background:#000;"></div>
<div style="position:absolute;left:677px;top:174px;width:3px;height:1px;background:#000;"></div>
<div style="position:absolute;left:678px;top:175px;width:1px;height:1px;background:#000;"></div>
<span class="t" style="left:687.3px;top:154.19px;font-size:11px;letter-spacing:-0.268px;">110</span>
<div style="position:absolute;left:711px;top:157px;width:15px;height:12px;box-sizing:border-box;background:#ECE9D8;border:1px solid;border-color:#FFFFFF #7d7b6e #7d7b6e #FFFFFF;"></div>
<div style="position:absolute;left:712px;top:158px;width:13px;height:10px;box-sizing:border-box;border:1px solid;border-color:#F1EFE2 #ACA899 #ACA899 #F1EFE2;"></div>
<div style="position:absolute;left:718px;top:161px;width:1px;height:1px;background:#000;"></div>
<div style="position:absolute;left:717px;top:162px;width:3px;height:1px;background:#000;"></div>
<div style="position:absolute;left:716px;top:163px;width:5px;height:1px;background:#000;"></div>
<div style="position:absolute;left:711px;top:169px;width:15px;height:11px;box-sizing:border-box;background:#ECE9D8;border:1px solid;border-color:#FFFFFF #7d7b6e #7d7b6e #FFFFFF;"></div>
<div style="position:absolute;left:712px;top:170px;width:13px;height:9px;box-sizing:border-box;border:1px solid;border-color:#F1EFE2 #ACA899 #ACA899 #F1EFE2;"></div>
<div style="position:absolute;left:716px;top:173px;width:5px;height:1px;background:#000;"></div>
<div style="position:absolute;left:717px;top:174px;width:3px;height:1px;background:#000;"></div>
<div style="position:absolute;left:718px;top:175px;width:1px;height:1px;background:#000;"></div>
<div style="position:absolute;left:741px;top:125px;width:40px;height:62px;box-sizing:border-box;background:#ECE9D8;border:1px solid;border-color:#FFFFFF #716F64 #ECE9D8 #FFFFFF;"></div>
<div style="position:absolute;left:742px;top:126px;width:38px;height:60px;box-sizing:border-box;border:1px solid;border-color:#F1EFE2 #ACA899 #ECE9D8 #F1EFE2;"></div>
<span class="t" style="left:747.5px;top:147.19px;font-size:11px;letter-spacing:-0.300px;">Grips</span>
<div style="position:absolute;left:235px;top:277px;width:273px;height:24px;box-sizing:border-box;background:#ECE9D8;border:1px solid;border-color:#FFFFFF #716F64 #716F64 #FFFFFF;"></div>
<div style="position:absolute;left:236px;top:278px;width:271px;height:22px;box-sizing:border-box;border:1px solid;border-color:#F1EFE2 #ACA899 #ACA899 #F1EFE2;"></div>
<span class="t" style="left:301.3px;top:279.19px;font-size:11px;letter-spacing:-0.254px;">Clubmaker&nbsp;Golfers&nbsp;Database</span>
<div style="position:absolute;left:228px;top:310px;width:150px;height:23px;box-sizing:border-box;background:#ECE9D8;border:1px solid;border-color:#FFFFFF #716F64 #716F64 #FFFFFF;"></div>
<div style="position:absolute;left:229px;top:311px;width:148px;height:21px;box-sizing:border-box;border:1px solid;border-color:#F1EFE2 #ACA899 #ACA899 #F1EFE2;"></div>
<span class="t" style="left:235.3px;top:312.19px;font-size:11px;letter-spacing:-0.074px;">Personal&nbsp;Fitting&nbsp;Information</span>
<div style="position:absolute;left:230px;top:327px;width:146px;height:4px;background:#ECE9D8;"></div>
<div style="position:absolute;left:379px;top:310px;width:136px;height:23px;box-sizing:border-box;background:#ECE9D8;border:1px solid;border-color:#FFFFFF #716F64 #716F64 #FFFFFF;"></div>
<div style="position:absolute;left:380px;top:311px;width:134px;height:21px;box-sizing:border-box;border:1px solid;border-color:#F1EFE2 #ACA899 #ACA899 #F1EFE2;"></div>
<span class="t" style="left:385.5px;top:312.19px;font-size:11px;letter-spacing:-0.041px;">FavoriteClub&nbsp;Information</span>
<div style="position:absolute;left:235px;top:339px;width:119px;height:25px;box-sizing:border-box;border:1px solid #ACA899;"></div>
<div style="position:absolute;left:236px;top:340px;width:119px;height:25px;box-sizing:border-box;border:1px solid #FFFFFF;"></div>
<div style="position:absolute;left:353px;top:339px;width:1px;height:25px;background:#ACA899;"></div>
<div style="position:absolute;left:235px;top:363px;width:119px;height:1px;background:#ACA899;"></div>
<div style="position:absolute;left:246px;top:338px;width:99px;height:4px;background:#ECE9D8;"></div>
<span class="t" style="left:275.3px;top:330.19px;font-size:11px;font-weight:bold;letter-spacing:0.398px;">Gender</span>
<svg class="r" style="left:238px;top:348px" width="12" height="12" viewBox="0 0 12 12" shape-rendering="crispEdges"><path d="M2 2h8v8h-8z M4 1h4v10h-4z M1 4h10v4h-10z" fill="#fff"/><path d="M4 0h4v1h-4z M2 1h2v1h-2z M8 1h2v1h-2z M1 2h1v2h-1z M0 4h1v4h-1z M1 8h1v2h-1z" fill="#ACA899"/><path d="M4 1h4v1h-4z M2 2h2v1h-2z M8 2h2v1h-2z M2 3h1v1h-1z M1 4h1v4h-1z M2 8h1v1h-1z" fill="#716F64"/><path d="M10 2h1v2h-1z M11 4h1v4h-1z M10 8h1v2h-1z M8 10h2v1h-2z M4 11h4v1h-4z M2 10h2v1h-2z" fill="#FFFFFF"/><path d="M9 3h1v1h-1z M10 4h1v4h-1z M9 8h1v1h-1z M8 9h2v1h-2z M4 10h4v1h-4z M2 9h2v1h-2z" fill="#F1EFE2"/></svg>
<span class="t" style="left:254px;top:345.19px;font-size:11px;letter-spacing:-0.300px;">Male</span>
<svg class="r" style="left:294px;top:348px" width="12" height="12" viewBox="0 0 12 12" shape-rendering="crispEdges"><path d="M2 2h8v8h-8z M4 1h4v10h-4z M1 4h10v4h-10z" fill="#fff"/><path d="M4 0h4v1h-4z M2 1h2v1h-2z M8 1h2v1h-2z M1 2h1v2h-1z M0 4h1v4h-1z M1 8h1v2h-1z" fill="#ACA899"/><path d="M4 1h4v1h-4z M2 2h2v1h-2z M8 2h2v1h-2z M2 3h1v1h-1z M1 4h1v4h-1z M2 8h1v1h-1z" fill="#716F64"/><path d="M10 2h1v2h-1z M11 4h1v4h-1z M10 8h1v2h-1z M8 10h2v1h-2z M4 11h4v1h-4z M2 10h2v1h-2z" fill="#FFFFFF"/><path d="M9 3h1v1h-1z M10 4h1v4h-1z M9 8h1v1h-1z M8 9h2v1h-2z M4 10h4v1h-4z M2 9h2v1h-2z" fill="#F1EFE2"/></svg>
<span class="t" style="left:310px;top:345.19px;font-size:11px;letter-spacing:-0.300px;">Female</span>
<div style="position:absolute;left:355px;top:339px;width:151px;height:25px;box-sizing:border-box;border:1px solid #ACA899;"></div>
<div style="position:absolute;left:356px;top:340px;width:151px;height:25px;box-sizing:border-box;border:1px solid #FFFFFF;"></div>
<div style="position:absolute;left:505px;top:339px;width:1px;height:25px;background:#ACA899;"></div>
<div style="position:absolute;left:355px;top:363px;width:151px;height:1px;background:#ACA899;"></div>
<div style="position:absolute;left:366px;top:338px;width:130px;height:4px;background:#ECE9D8;"></div>
<span class="t" style="left:377px;top:330.19px;font-size:11px;font-weight:bold;letter-spacing:0.266px;">Physical&nbsp;Dominance</span>
<svg class="r" style="left:358px;top:349px" width="12" height="12" viewBox="0 0 12 12" shape-rendering="crispEdges"><path d="M2 2h8v8h-8z M4 1h4v10h-4z M1 4h10v4h-10z" fill="#fff"/><path d="M4 0h4v1h-4z M2 1h2v1h-2z M8 1h2v1h-2z M1 2h1v2h-1z M0 4h1v4h-1z M1 8h1v2h-1z" fill="#ACA899"/><path d="M4 1h4v1h-4z M2 2h2v1h-2z M8 2h2v1h-2z M2 3h1v1h-1z M1 4h1v4h-1z M2 8h1v1h-1z" fill="#716F64"/><path d="M10 2h1v2h-1z M11 4h1v4h-1z M10 8h1v2h-1z M8 10h2v1h-2z M4 11h4v1h-4z M2 10h2v1h-2z" fill="#FFFFFF"/><path d="M9 3h1v1h-1z M10 4h1v4h-1z M9 8h1v1h-1z M8 9h2v1h-2z M4 10h4v1h-4z M2 9h2v1h-2z" fill="#F1EFE2"/></svg>
<span class="t" style="left:374px;top:346.19px;font-size:11px;letter-spacing:-0.150px;">Left&nbsp;Hand</span>
<svg class="r" style="left:430px;top:349px" width="12" height="12" viewBox="0 0 12 12" shape-rendering="crispEdges"><path d="M2 2h8v8h-8z M4 1h4v10h-4z M1 4h10v4h-10z" fill="#fff"/><path d="M4 0h4v1h-4z M2 1h2v1h-2z M8 1h2v1h-2z M1 2h1v2h-1z M0 4h1v4h-1z M1 8h1v2h-1z" fill="#ACA899"/><path d="M4 1h4v1h-4z M2 2h2v1h-2z M8 2h2v1h-2z M2 3h1v1h-1z M1 4h1v4h-1z M2 8h1v1h-1z" fill="#716F64"/><path d="M10 2h1v2h-1z M11 4h1v4h-1z M10 8h1v2h-1z M8 10h2v1h-2z M4 11h4v1h-4z M2 10h2v1h-2z" fill="#FFFFFF"/><path d="M9 3h1v1h-1z M10 4h1v4h-1z M9 8h1v1h-1z M8 9h2v1h-2z M4 10h4v1h-4z M2 9h2v1h-2z" fill="#F1EFE2"/><rect x="4" y="5" width="4" height="2" fill="#000"/><rect x="5" y="4" width="2" height="4" fill="#000"/></svg>
<span class="t" style="left:446px;top:345.19px;font-size:11px;letter-spacing:-0.281px;">Right&nbsp;Hand</span>
<span class="t" style="left:235px;top:362.19px;font-size:11px;font-weight:bold;letter-spacing:0.198px;">GolferName:</span>
<span class="t" style="left:306.5px;top:361.21px;font-size:9.5px;letter-spacing:-0.057px;">[&nbsp;i.e.,&nbsp;Firstname&nbsp;Lastname&nbsp;Suffix-(Set1)&nbsp;]</span>
<div style="position:absolute;left:236px;top:381px;width:272px;height:20px;box-sizing:border-box;background:#FCFFFA;border:1px solid;border-color:#ACA899 #FFFFFF #FFFFFF #ACA899;"></div>
<div style="position:absolute;left:237px;top:382px;width:270px;height:18px;box-sizing:border-box;border:1px solid;border-color:#716F64 #F1EFE2 #F1EFE2 #716F64;"></div>
<span class="t" style="left:247px;top:382.19px;font-size:11px;letter-spacing:-0.260px;">Bobby&nbsp;Jones</span>
<span class="t" style="left:235px;top:402.19px;font-size:11px;letter-spacing:-0.051px;">Street&nbsp;Address:</span>
<div style="position:absolute;left:236px;top:421px;width:272px;height:20px;box-sizing:border-box;background:#FCFFFA;border:1px solid;border-color:#ACA899 #FFFFFF #FFFFFF #ACA899;"></div>
<div style="position:absolute;left:237px;top:422px;width:270px;height:18px;box-sizing:border-box;border:1px solid;border-color:#716F64 #F1EFE2 #F1EFE2 #716F64;"></div>
<span class="t" style="left:235px;top:442.19px;font-size:11px;letter-spacing:-0.113px;">City(State)&nbsp;ZipCode:</span>
<span class="t" style="left:358px;top:442.19px;font-size:11px;letter-spacing:-0.300px;">OR</span>
<span class="t" style="left:397.5px;top:442.19px;font-size:11px;letter-spacing:-0.070px;">City(Country)&nbsp;ZipCode:</span>
<div style="position:absolute;left:236px;top:461px;width:272px;height:20px;box-sizing:border-box;background:#FCFFFA;border:1px solid;border-color:#ACA899 #FFFFFF #FFFFFF #ACA899;"></div>
<div style="position:absolute;left:237px;top:462px;width:270px;height:18px;box-sizing:border-box;border:1px solid;border-color:#716F64 #F1EFE2 #F1EFE2 #716F64;"></div>
<span class="t" style="left:234.5px;top:482.19px;font-size:11px;letter-spacing:-0.300px;">Email&nbsp;Address:</span>
<div style="position:absolute;left:236px;top:501px;width:272px;height:20px;box-sizing:border-box;background:#FCFFFA;border:1px solid;border-color:#ACA899 #FFFFFF #FFFFFF #ACA899;"></div>
<div style="position:absolute;left:237px;top:502px;width:270px;height:18px;box-sizing:border-box;border:1px solid;border-color:#716F64 #F1EFE2 #F1EFE2 #716F64;"></div>
<span class="t" style="left:234.5px;top:522.19px;font-size:11px;letter-spacing:-0.300px;">Phone&nbsp;Number:</span>
<div style="position:absolute;left:236px;top:541px;width:272px;height:20px;box-sizing:border-box;background:#FCFFFA;border:1px solid;border-color:#ACA899 #FFFFFF #FFFFFF #ACA899;"></div>
<div style="position:absolute;left:237px;top:542px;width:270px;height:18px;box-sizing:border-box;border:1px solid;border-color:#716F64 #F1EFE2 #F1EFE2 #716F64;"></div>
<div style="position:absolute;left:525px;top:293px;width:128px;height:24px;box-sizing:border-box;background:#ECE9D8;border:1px solid;border-color:#FFFFFF #716F64 #716F64 #FFFFFF;"></div>
<div style="position:absolute;left:526px;top:294px;width:126px;height:22px;box-sizing:border-box;border:1px solid;border-color:#F1EFE2 #ACA899 #ACA899 #F1EFE2;"></div>
<span class="t" style="left:548.5px;top:296.19px;font-size:11px;letter-spacing:-0.300px;">Detail&nbsp;ClubSpecs</span>
<div style="position:absolute;left:653px;top:293px;width:128px;height:24px;box-sizing:border-box;background:#ECE9D8;border:1px solid;border-color:#FFFFFF #716F64 #716F64 #FFFFFF;"></div>
<div style="position:absolute;left:654px;top:294px;width:126px;height:22px;box-sizing:border-box;border:1px solid;border-color:#F1EFE2 #ACA899 #ACA899 #F1EFE2;"></div>
<span class="t" style="left:665.5px;top:296.19px;font-size:11px;letter-spacing:-0.300px;">CustomFit&nbsp;ClubSpecs</span>
<div style="position:absolute;left:525px;top:317px;width:127px;height:47px;box-sizing:border-box;border:1px solid #ACA899;"></div>
<div style="position:absolute;left:526px;top:318px;width:127px;height:47px;box-sizing:border-box;border:1px solid #FFFFFF;"></div>
<div style="position:absolute;left:651px;top:317px;width:1px;height:47px;background:#ACA899;"></div>
<div style="position:absolute;left:525px;top:363px;width:127px;height:1px;background:#ACA899;"></div>
<div style="position:absolute;left:653px;top:317px;width:127px;height:47px;box-sizing:border-box;border:1px solid #ACA899;"></div>
<div style="position:absolute;left:654px;top:318px;width:127px;height:47px;box-sizing:border-box;border:1px solid #FFFFFF;"></div>
<div style="position:absolute;left:779px;top:317px;width:1px;height:47px;background:#ACA899;"></div>
<div style="position:absolute;left:653px;top:363px;width:127px;height:1px;background:#ACA899;"></div>
<svg class="r" style="left:529px;top:323px" width="12" height="12" viewBox="0 0 12 12" shape-rendering="crispEdges"><path d="M2 2h8v8h-8z M4 1h4v10h-4z M1 4h10v4h-10z" fill="#fff"/><path d="M4 0h4v1h-4z M2 1h2v1h-2z M8 1h2v1h-2z M1 2h1v2h-1z M0 4h1v4h-1z M1 8h1v2h-1z" fill="#ACA899"/><path d="M4 1h4v1h-4z M2 2h2v1h-2z M8 2h2v1h-2z M2 3h1v1h-1z M1 4h1v4h-1z M2 8h1v1h-1z" fill="#716F64"/><path d="M10 2h1v2h-1z M11 4h1v4h-1z M10 8h1v2h-1z M8 10h2v1h-2z M4 11h4v1h-4z M2 10h2v1h-2z" fill="#FFFFFF"/><path d="M9 3h1v1h-1z M10 4h1v4h-1z M9 8h1v1h-1z M8 9h2v1h-2z M4 10h4v1h-4z M2 9h2v1h-2z" fill="#F1EFE2"/></svg>
<span class="t" style="left:544px;top:319.19px;font-size:11px;letter-spacing:-0.020px;">Display&nbsp;to&nbsp;chart</span>
<svg class="r" style="left:529px;top:343px" width="12" height="12" viewBox="0 0 12 12" shape-rendering="crispEdges"><path d="M2 2h8v8h-8z M4 1h4v10h-4z M1 4h10v4h-10z" fill="#fff"/><path d="M4 0h4v1h-4z M2 1h2v1h-2z M8 1h2v1h-2z M1 2h1v2h-1z M0 4h1v4h-1z M1 8h1v2h-1z" fill="#ACA899"/><path d="M4 1h4v1h-4z M2 2h2v1h-2z M8 2h2v1h-2z M2 3h1v1h-1z M1 4h1v4h-1z M2 8h1v1h-1z" fill="#716F64"/><path d="M10 2h1v2h-1z M11 4h1v4h-1z M10 8h1v2h-1z M8 10h2v1h-2z M4 11h4v1h-4z M2 10h2v1h-2z" fill="#FFFFFF"/><path d="M9 3h1v1h-1z M10 4h1v4h-1z M9 8h1v1h-1z M8 9h2v1h-2z M4 10h4v1h-4z M2 9h2v1h-2z" fill="#F1EFE2"/><rect x="4" y="5" width="4" height="2" fill="#000"/><rect x="5" y="4" width="2" height="4" fill="#000"/></svg>
<span class="t" style="left:544px;top:340.19px;font-size:11px;letter-spacing:-0.018px;">Don&#x27;t&nbsp;display&nbsp;to&nbsp;chart</span>
<svg class="r" style="left:657px;top:323px" width="12" height="12" viewBox="0 0 12 12" shape-rendering="crispEdges"><path d="M2 2h8v8h-8z M4 1h4v10h-4z M1 4h10v4h-10z" fill="#fff"/><path d="M4 0h4v1h-4z M2 1h2v1h-2z M8 1h2v1h-2z M1 2h1v2h-1z M0 4h1v4h-1z M1 8h1v2h-1z" fill="#ACA899"/><path d="M4 1h4v1h-4z M2 2h2v1h-2z M8 2h2v1h-2z M2 3h1v1h-1z M1 4h1v4h-1z M2 8h1v1h-1z" fill="#716F64"/><path d="M10 2h1v2h-1z M11 4h1v4h-1z M10 8h1v2h-1z M8 10h2v1h-2z M4 11h4v1h-4z M2 10h2v1h-2z" fill="#FFFFFF"/><path d="M9 3h1v1h-1z M10 4h1v4h-1z M9 8h1v1h-1z M8 9h2v1h-2z M4 10h4v1h-4z M2 9h2v1h-2z" fill="#F1EFE2"/></svg>
<span class="t" style="left:672px;top:319.19px;font-size:11px;letter-spacing:-0.054px;">Display&nbsp;to&nbsp;chart</span>
<svg class="r" style="left:657px;top:345px" width="12" height="12" viewBox="0 0 12 12" shape-rendering="crispEdges"><path d="M2 2h8v8h-8z M4 1h4v10h-4z M1 4h10v4h-10z" fill="#fff"/><path d="M4 0h4v1h-4z M2 1h2v1h-2z M8 1h2v1h-2z M1 2h1v2h-1z M0 4h1v4h-1z M1 8h1v2h-1z" fill="#ACA899"/><path d="M4 1h4v1h-4z M2 2h2v1h-2z M8 2h2v1h-2z M2 3h1v1h-1z M1 4h1v4h-1z M2 8h1v1h-1z" fill="#716F64"/><path d="M10 2h1v2h-1z M11 4h1v4h-1z M10 8h1v2h-1z M8 10h2v1h-2z M4 11h4v1h-4z M2 10h2v1h-2z" fill="#FFFFFF"/><path d="M9 3h1v1h-1z M10 4h1v4h-1z M9 8h1v1h-1z M8 9h2v1h-2z M4 10h4v1h-4z M2 9h2v1h-2z" fill="#F1EFE2"/><rect x="4" y="5" width="4" height="2" fill="#000"/><rect x="5" y="4" width="2" height="4" fill="#000"/></svg>
<span class="t" style="left:672px;top:342.19px;font-size:11px;letter-spacing:-0.018px;">Don&#x27;t&nbsp;display&nbsp;to&nbsp;chart</span>
<div style="position:absolute;left:525px;top:365px;width:128px;height:27px;box-sizing:border-box;background:#ECE9D8;border:1px solid;border-color:#FFFFFF #716F64 #716F64 #FFFFFF;"></div>
<div style="position:absolute;left:526px;top:366px;width:126px;height:25px;box-sizing:border-box;border:1px solid;border-color:#F1EFE2 #ACA899 #ACA899 #F1EFE2;"></div>
<span class="t" style="left:536px;top:368.19px;font-size:11px;letter-spacing:-0.203px;">Refresh&nbsp;SpecsReport</span>
<div style="position:absolute;left:653px;top:365px;width:128px;height:27px;box-sizing:border-box;background:#ECE9D8;border:1px solid;border-color:#FFFFFF #716F64 #716F64 #FFFFFF;"></div>
<div style="position:absolute;left:654px;top:366px;width:126px;height:25px;box-sizing:border-box;border:1px solid;border-color:#F1EFE2 #ACA899 #ACA899 #F1EFE2;"></div>
<span class="t" style="left:671.5px;top:368.19px;font-size:11px;letter-spacing:-0.277px;">Clear&nbsp;SpecsReport</span>
<div style="position:absolute;left:517px;top:387px;width:269px;height:8px;background:#ECE9D8;"></div>
<div style="position:absolute;left:515px;top:283px;width:271px;height:105px;box-sizing:border-box;border:1px solid #ACA899;"></div>
<div style="position:absolute;left:516px;top:284px;width:271px;height:105px;box-sizing:border-box;border:1px solid #FFFFFF;"></div>
<div style="position:absolute;left:785px;top:283px;width:1px;height:105px;background:#ACA899;"></div>
<div style="position:absolute;left:515px;top:387px;width:271px;height:1px;background:#ACA899;"></div>
<div style="position:absolute;left:526px;top:282px;width:250px;height:4px;background:#ECE9D8;"></div>
<span class="t" style="left:574px;top:274.19px;font-size:11px;font-weight:bold;letter-spacing:0.094px;">All&nbsp;Golfclubs&nbsp;Specifications</span>
<div style="position:absolute;left:515px;top:395px;width:271px;height:106px;box-sizing:border-box;border:1px solid #ACA899;"></div>
<div style="position:absolute;left:516px;top:396px;width:271px;height:106px;box-sizing:border-box;border:1px solid #FFFFFF;"></div>
<div style="position:absolute;left:785px;top:395px;width:1px;height:106px;background:#ACA899;"></div>
<div style="position:absolute;left:515px;top:500px;width:271px;height:1px;background:#ACA899;"></div>
<div style="position:absolute;left:526px;top:394px;width:84px;height:4px;background:#ECE9D8;"></div>
<span class="t" style="left:528px;top:386.19px;font-size:11px;font-weight:bold;letter-spacing:0.304px;">Notes&nbsp;Section</span>
<div style="position:absolute;left:517px;top:405px;width:270px;height:95px;box-sizing:border-box;background:#FCFFFA;border:1px solid;border-color:#ACA899 #FFFFFF #FFFFFF #ACA899;"></div>
<div style="position:absolute;left:518px;top:406px;width:268px;height:93px;box-sizing:border-box;border:1px solid;border-color:#716F64 #F1EFE2 #F1EFE2 #716F64;"></div>
<div style="position:absolute;left:515px;top:507px;width:271px;height:57px;box-sizing:border-box;border:1px solid #ACA899;"></div>
<div style="position:absolute;left:516px;top:508px;width:271px;height:57px;box-sizing:border-box;border:1px solid #FFFFFF;"></div>
<div style="position:absolute;left:785px;top:507px;width:1px;height:57px;background:#ACA899;"></div>
<div style="position:absolute;left:515px;top:563px;width:271px;height:1px;background:#ACA899;"></div>
<div style="position:absolute;left:526px;top:506px;width:242px;height:4px;background:#ECE9D8;"></div>
<span class="t" style="left:528px;top:498.19px;font-size:11px;font-weight:bold;letter-spacing:0.460px;">Current&nbsp;Clubmaker&nbsp;(Name&nbsp;&amp;&nbsp;Designation)</span>
<div style="position:absolute;left:517px;top:518px;width:160px;height:22px;box-sizing:border-box;background:#FCFFFA;border:1px solid;border-color:#ACA899 #FFFFFF #FFFFFF #ACA899;"></div>
<div style="position:absolute;left:518px;top:519px;width:158px;height:20px;box-sizing:border-box;border:1px solid;border-color:#716F64 #F1EFE2 #F1EFE2 #716F64;"></div>
<span class="t" style="left:528.3px;top:518.19px;font-size:11px;letter-spacing:-0.084px;">Jacques&nbsp;Intriere</span>
<div style="position:absolute;left:677px;top:517px;width:104px;height:24px;box-sizing:border-box;background:#ECE9D8;border:1px solid;border-color:#FFFFFF #716F64 #716F64 #FFFFFF;"></div>
<div style="position:absolute;left:678px;top:518px;width:102px;height:22px;box-sizing:border-box;border:1px solid;border-color:#F1EFE2 #ACA899 #ACA899 #F1EFE2;"></div>
<span class="t" style="left:683px;top:519.19px;font-size:11px;letter-spacing:-0.247px;">Update&nbsp;Clubmaker</span>
<svg class="r" style="left:519px;top:548px" width="12" height="12" viewBox="0 0 12 12" shape-rendering="crispEdges"><path d="M2 2h8v8h-8z M4 1h4v10h-4z M1 4h10v4h-10z" fill="#fff"/><path d="M4 0h4v1h-4z M2 1h2v1h-2z M8 1h2v1h-2z M1 2h1v2h-1z M0 4h1v4h-1z M1 8h1v2h-1z" fill="#ACA899"/><path d="M4 1h4v1h-4z M2 2h2v1h-2z M8 2h2v1h-2z M2 3h1v1h-1z M1 4h1v4h-1z M2 8h1v1h-1z" fill="#716F64"/><path d="M10 2h1v2h-1z M11 4h1v4h-1z M10 8h1v2h-1z M8 10h2v1h-2z M4 11h4v1h-4z M2 10h2v1h-2z" fill="#FFFFFF"/><path d="M9 3h1v1h-1z M10 4h1v4h-1z M9 8h1v1h-1z M8 9h2v1h-2z M4 10h4v1h-4z M2 9h2v1h-2z" fill="#F1EFE2"/></svg>
<span class="t" style="left:534px;top:542.19px;font-size:11px;letter-spacing:-0.300px;">ClubmakerLevel</span>
<svg class="r" style="left:614px;top:549px" width="12" height="12" viewBox="0 0 12 12" shape-rendering="crispEdges"><path d="M2 2h8v8h-8z M4 1h4v10h-4z M1 4h10v4h-10z" fill="#fff"/><path d="M4 0h4v1h-4z M2 1h2v1h-2z M8 1h2v1h-2z M1 2h1v2h-1z M0 4h1v4h-1z M1 8h1v2h-1z" fill="#ACA899"/><path d="M4 1h4v1h-4z M2 2h2v1h-2z M8 2h2v1h-2z M2 3h1v1h-1z M1 4h1v4h-1z M2 8h1v1h-1z" fill="#716F64"/><path d="M10 2h1v2h-1z M11 4h1v4h-1z M10 8h1v2h-1z M8 10h2v1h-2z M4 11h4v1h-4z M2 10h2v1h-2z" fill="#FFFFFF"/><path d="M9 3h1v1h-1z M10 4h1v4h-1z M9 8h1v1h-1z M8 9h2v1h-2z M4 10h4v1h-4z M2 9h2v1h-2z" fill="#F1EFE2"/><rect x="4" y="5" width="4" height="2" fill="#000"/><rect x="5" y="4" width="2" height="4" fill="#000"/></svg>
<span class="t" style="left:630.5px;top:541.19px;font-size:11px;letter-spacing:-0.227px;">AdvancedLevel</span>
<svg class="r" style="left:710px;top:549px" width="12" height="12" viewBox="0 0 12 12" shape-rendering="crispEdges"><path d="M2 2h8v8h-8z M4 1h4v10h-4z M1 4h10v4h-10z" fill="#fff"/><path d="M4 0h4v1h-4z M2 1h2v1h-2z M8 1h2v1h-2z M1 2h1v2h-1z M0 4h1v4h-1z M1 8h1v2h-1z" fill="#ACA899"/><path d="M4 1h4v1h-4z M2 2h2v1h-2z M8 2h2v1h-2z M2 3h1v1h-1z M1 4h1v4h-1z M2 8h1v1h-1z" fill="#716F64"/><path d="M10 2h1v2h-1z M11 4h1v4h-1z M10 8h1v2h-1z M8 10h2v1h-2z M4 11h4v1h-4z M2 10h2v1h-2z" fill="#FFFFFF"/><path d="M9 3h1v1h-1z M10 4h1v4h-1z M9 8h1v1h-1z M8 9h2v1h-2z M4 10h4v1h-4z M2 9h2v1h-2z" fill="#F1EFE2"/></svg>
<span class="t" style="left:726px;top:545.19px;font-size:11px;letter-spacing:-0.191px;">MasterLevel</span>
<div style="position:absolute;left:515px;top:565px;width:184px;height:25px;box-sizing:border-box;background:#ECE9D8;border:1px solid;border-color:#FFFFFF #716F64 #716F64 #FFFFFF;"></div>
<div style="position:absolute;left:516px;top:566px;width:182px;height:23px;box-sizing:border-box;border:1px solid;border-color:#F1EFE2 #ACA899 #ACA899 #F1EFE2;"></div>
<span class="t" style="left:527.5px;top:568.19px;font-size:11px;letter-spacing:-0.184px;">SwingWeight/TipCuts&nbsp;Calculation</span>
<div style="position:absolute;left:517px;top:584px;width:180px;height:4px;background:#ECE9D8;"></div>
<span class="t" style="left:706.5px;top:567.53px;font-size:10px;font-weight:bold;letter-spacing:0.565px;">©GolfTech2000</span>
<div style="position:absolute;left:0px;top:589px;width:792px;height:3px;background:linear-gradient(0deg,#001ae0 0,#001ae0 1px,#156ae8 1px,#156ae8 2px,#0448e0 2px,#0448e0 3px);"></div>
</div></body></html>
